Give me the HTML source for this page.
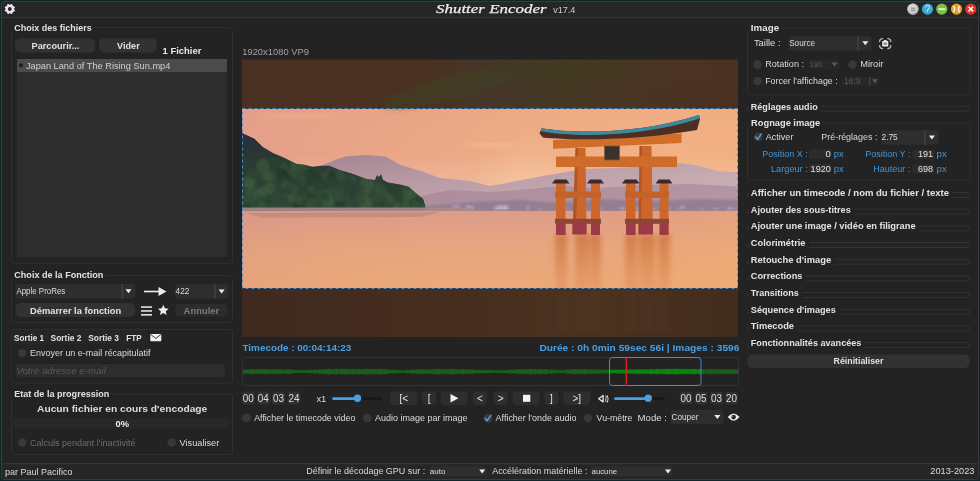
<!DOCTYPE html>
<html><head><meta charset="utf-8"><title>Shutter Encoder</title>
<style>html,body{margin:0;padding:0;background:#10262b;overflow:hidden;width:980px;height:481px}svg{display:block;will-change:transform}</style>
</head><body>
<svg width="980" height="481" viewBox="0 0 980 481">
<defs>
<radialGradient id="gball" cx="0.45" cy="0.4" r="0.65"><stop offset="0" stop-color="#e0e0e0"/><stop offset="0.7" stop-color="#c4c4c4"/><stop offset="1" stop-color="#9a9a9a"/></radialGradient>
</defs>
<rect x="0" y="0" width="980" height="481" fill="#10262b"/>
<rect x="1" y="1" width="978" height="479" rx="2.5" fill="#232323"/>
<rect x="1.5" y="1.5" width="977" height="478" rx="2.5" fill="none" stroke="#3b3b3b" stroke-width="1"/>
<path d="M2,17 V5 Q2,2 5,2 H975 Q978,2 978,5 V17 Z" fill="#262626"/>
<rect x="2" y="17" width="976" height="1" rx="0" fill="#363636" />
<path d="M2,464 H978 V476 Q978,479 975,479 H5 Q2,479 2,476 Z" fill="#262626"/>
<rect x="2" y="463" width="976" height="1.4" rx="0" fill="#343434" />
<circle cx="9.8" cy="9.0" r="4.1" fill="#e8e8e8"/>
<circle cx="13.50" cy="10.53" r="1.25" fill="#e8e8e8"/>
<circle cx="11.33" cy="12.70" r="1.25" fill="#e8e8e8"/>
<circle cx="8.27" cy="12.70" r="1.25" fill="#e8e8e8"/>
<circle cx="6.10" cy="10.53" r="1.25" fill="#e8e8e8"/>
<circle cx="6.10" cy="7.47" r="1.25" fill="#e8e8e8"/>
<circle cx="8.27" cy="5.30" r="1.25" fill="#e8e8e8"/>
<circle cx="11.33" cy="5.30" r="1.25" fill="#e8e8e8"/>
<circle cx="13.50" cy="7.47" r="1.25" fill="#e8e8e8"/>
<circle cx="9.8" cy="9.0" r="1.9" fill="#262626"/>
<text x="436" y="13.2" font-family="Liberation Serif" font-size="13.5" font-weight="400" font-style="italic" fill="#eeeeee" stroke="#eeeeee" stroke-width="0.25" textLength="110.5" lengthAdjust="spacingAndGlyphs">Shutter Encoder</text>
<text x="553.2" y="13" font-family="Liberation Sans" font-size="8.6" font-weight="400" fill="#cfcfcf" textLength="22.2" lengthAdjust="spacingAndGlyphs" >v17.4</text>
<circle cx="912.9" cy="9.1" r="5.6" fill="#c0c0c0"/>
<circle cx="912.9" cy="9.1" r="5.6" fill="url(#gball)"/>
<rect x="911.4" y="7.6" width="1.2" height="1.2" fill="#5a5a5a"/>
<rect x="911.4" y="9.6" width="1.2" height="1.2" fill="#5a5a5a"/>
<rect x="913.4" y="7.6" width="1.2" height="1.2" fill="#5a5a5a"/>
<rect x="913.4" y="9.6" width="1.2" height="1.2" fill="#5a5a5a"/>
<circle cx="927.5" cy="9.1" r="5.6" fill="#39a6d6"/>
<path d="M925.6,7.4 Q925.6,5.3 927.5,5.3 Q929.6,5.3 929.6,7.3 Q929.6,8.7 928.1,9.4 Q927.2,9.9 927.2,11.0 V12.2" fill="none" stroke="#b8e2f2" stroke-width="1.1"/>
<circle cx="941.8" cy="9.1" r="5.6" fill="#7cc242"/>
<rect x="938.4" y="8.2" width="6.8" height="1.9" rx="0" fill="#e4f2d8" />
<circle cx="956.5" cy="9.1" r="5.6" fill="#e2a031"/>
<path d="M953.6,6.4 Q955.6,9.1 953.6,11.8" fill="none" stroke="#fdf0d8" stroke-width="1.4" stroke-linecap="round"/>
<path d="M959.4,6.4 Q957.4,9.1 959.4,11.8" fill="none" stroke="#fdf0d8" stroke-width="1.4" stroke-linecap="round"/>
<circle cx="970.8" cy="9.1" r="5.6" fill="#e3352b"/>
<path d="M968.5,6.8 L973.0999999999999,11.4 M973.0999999999999,6.8 L968.5,11.4" stroke="#ffffff" stroke-width="1.5"/>
<rect x="11.5" y="27.5" width="221" height="236" rx="3" fill="none" stroke="#2f2f2f" stroke-width="1" />
<rect x="11.7" y="25" width="82.6" height="5" rx="0" fill="#232323" />
<text x="14.3" y="31.2" font-family="Liberation Sans" font-size="9.2" font-weight="700" fill="#e2e2e2" textLength="77.4" lengthAdjust="spacingAndGlyphs" >Choix des fichiers</text>
<rect x="15" y="38.5" width="80" height="14" rx="5" fill="#323232" />
<text x="31.6" y="49" font-family="Liberation Sans" font-size="9.6" font-weight="700" fill="#e2e2e2" textLength="47.8" lengthAdjust="spacingAndGlyphs" >Parcourir...</text>
<rect x="99" y="38.5" width="58" height="14" rx="5" fill="#323232" />
<text x="117.1" y="49" font-family="Liberation Sans" font-size="9.6" font-weight="700" fill="#e2e2e2" textLength="22.6" lengthAdjust="spacingAndGlyphs" >Vider</text>
<text x="162.6" y="54" font-family="Liberation Sans" font-size="9.4" font-weight="700" fill="#e8e8e8" textLength="38.8" lengthAdjust="spacingAndGlyphs" >1 Fichier</text>
<rect x="17" y="59" width="210" height="198" rx="0" fill="#2d2d2d" />
<rect x="17" y="59" width="210" height="13" rx="0" fill="#4b4b4b" />
<circle cx="21" cy="65.2" r="2" fill="#1e1e1e"/>
<text x="25.9" y="68.8" font-family="Liberation Sans" font-size="9.4" font-weight="400" fill="#cfcfcf" textLength="144.5" lengthAdjust="spacingAndGlyphs" >Japan Land of The Rising Sun.mp4</text>
<rect x="11.5" y="275.5" width="221" height="47" rx="3" fill="none" stroke="#2f2f2f" stroke-width="1" />
<rect x="11.7" y="273" width="94.3" height="5" rx="0" fill="#232323" />
<text x="14.3" y="278.2" font-family="Liberation Sans" font-size="9.2" font-weight="700" fill="#e2e2e2" textLength="89.1" lengthAdjust="spacingAndGlyphs" >Choix de la Fonction</text>
<rect x="15.6" y="284" width="119.6" height="14.5" rx="3" fill="#2e2e2e" />
<rect x="121.7" y="284" width="1" height="14.5" rx="0" fill="#4a4a4a" />
<path d="M125.5,289.25 L131.5,289.25 L128.5,293.25 Z" fill="#eeeeee"/>
<text x="16.4" y="293.7" font-family="Liberation Sans" font-size="8.6" font-weight="400" fill="#dddddd" textLength="48.9" lengthAdjust="spacingAndGlyphs" >Apple ProRes</text>
<path d="M144,291.5 H160" stroke="#eeeeee" stroke-width="1.6"/>
<path d="M158.5,287 L166.5,291.5 L158.5,296 Z" fill="#eeeeee"/>
<rect x="175" y="284.3" width="53" height="14.199999999999989" rx="3" fill="#2e2e2e" />
<rect x="214.5" y="284.3" width="1" height="14.199999999999989" rx="0" fill="#4a4a4a" />
<path d="M218.6,289.4 L224.6,289.4 L221.6,293.4 Z" fill="#eeeeee"/>
<text x="175.6" y="293.7" font-family="Liberation Sans" font-size="8.6" font-weight="400" fill="#dddddd" textLength="13.8" lengthAdjust="spacingAndGlyphs" >422</text>
<rect x="15.6" y="303" width="119.6" height="14" rx="5" fill="#323232" />
<text x="30.1" y="313.8" font-family="Liberation Sans" font-size="9" font-weight="700" fill="#e2e2e2" textLength="91.1" lengthAdjust="spacingAndGlyphs" >Démarrer la fonction</text>
<rect x="141" y="306.3" width="11" height="1.5" rx="0" fill="#eeeeee" />
<rect x="141" y="310.2" width="11" height="1.5" rx="0" fill="#eeeeee" />
<rect x="141" y="314.1" width="11" height="1.5" rx="0" fill="#eeeeee" />
<polygon points="163.30,304.80 164.83,308.30 168.63,308.67 165.77,311.20 166.59,314.93 163.30,313.00 160.01,314.93 160.83,311.20 157.97,308.67 161.77,308.30" fill="#eeeeee"/>
<rect x="175" y="304" width="53" height="12.5" rx="5" fill="#2c2c2c" />
<text x="183.6" y="313.8" font-family="Liberation Sans" font-size="9" font-weight="700" fill="#7a7a7a" textLength="35.6" lengthAdjust="spacingAndGlyphs" >Annuler</text>
<rect x="11" y="329.5" width="221.5" height="53.5" rx="3" fill="none" stroke="#2f2f2f" stroke-width="1" />
<rect x="11.5" y="330" width="134" height="14.5" rx="0" fill="#262626" />
<text x="14.1" y="340.8" font-family="Liberation Sans" font-size="8.6" font-weight="700" fill="#e2e2e2" textLength="29.9" lengthAdjust="spacingAndGlyphs" >Sortie 1</text>
<text x="50.6" y="340.8" font-family="Liberation Sans" font-size="8.6" font-weight="700" fill="#e2e2e2" textLength="30.8" lengthAdjust="spacingAndGlyphs" >Sortie 2</text>
<text x="88.3" y="340.8" font-family="Liberation Sans" font-size="8.6" font-weight="700" fill="#e2e2e2" textLength="30.6" lengthAdjust="spacingAndGlyphs" >Sortie 3</text>
<text x="126.3" y="340.8" font-family="Liberation Sans" font-size="8.6" font-weight="700" fill="#e2e2e2" textLength="15.4" lengthAdjust="spacingAndGlyphs" >FTP</text>
<rect x="150.3" y="334" width="11" height="7.2" rx="0.8" fill="#f2f2f2" />
<path d="M150.8,334.6 L155.8,338.4 L160.8,334.6" fill="none" stroke="#262626" stroke-width="0.9"/>
<circle cx="22.3" cy="353" r="4.3" fill="#383838"/>
<text x="30.1" y="355.6" font-family="Liberation Sans" font-size="9.2" font-weight="400" fill="#dcdcdc" textLength="120.3" lengthAdjust="spacingAndGlyphs" >Envoyer un e-mail récapitulatif</text>
<rect x="16" y="364" width="209" height="13" rx="3" fill="#2d2d2d" />
<text x="16.3" y="373.5" font-family="Liberation Sans" font-size="9.2" font-weight="400" fill="#5a5a5a" font-style="italic" textLength="89.6" lengthAdjust="spacingAndGlyphs" >Votre adresse e-mail</text>
<rect x="11.5" y="394.0" width="221" height="60.5" rx="3" fill="none" stroke="#2f2f2f" stroke-width="1" />
<rect x="11.6" y="391.5" width="100.4" height="5" rx="0" fill="#232323" />
<text x="14.2" y="397.4" font-family="Liberation Sans" font-size="9.2" font-weight="700" fill="#e2e2e2" textLength="95.2" lengthAdjust="spacingAndGlyphs" >Etat de la progression</text>
<text x="37.0" y="411.7" font-family="Liberation Sans" font-size="9.4" font-weight="700" fill="#dedede" textLength="170.3" lengthAdjust="spacingAndGlyphs" >Aucun fichier en cours d'encodage</text>
<rect x="13.1" y="418.5" width="216.6" height="9.4" rx="4" fill="#282828" />
<text x="115.6" y="427.2" font-family="Liberation Sans" font-size="8.8" font-weight="700" fill="#eeeeee" textLength="13.5" lengthAdjust="spacingAndGlyphs" >0%</text>
<circle cx="22.3" cy="442.5" r="4.3" fill="#383838"/>
<text x="30.1" y="446.3" font-family="Liberation Sans" font-size="9.2" font-weight="400" fill="#6e6e6e" textLength="105.3" lengthAdjust="spacingAndGlyphs" >Calculs pendant l'inactivité</text>
<circle cx="171.7" cy="442.5" r="4.3" fill="#383838"/>
<text x="179.6" y="445.9" font-family="Liberation Sans" font-size="9.2" font-weight="400" fill="#dcdcdc" textLength="39.7" lengthAdjust="spacingAndGlyphs" >Visualiser</text>
<text x="5.1" y="474.5" font-family="Liberation Sans" font-size="9.2" font-weight="400" fill="#dcdcdc" textLength="67.3" lengthAdjust="spacingAndGlyphs" >par Paul Pacifico</text>
<text x="306.2" y="474.3" font-family="Liberation Sans" font-size="9.2" font-weight="400" fill="#dcdcdc" textLength="119.0" lengthAdjust="spacingAndGlyphs" >Définir le décodage GPU sur :</text>
<rect x="429.2" y="466.6" width="57.10000000000002" height="9.699999999999989" rx="3" fill="#2e2e2e" />
<path d="M479.2,469.45000000000005 L485.2,469.45000000000005 L482.2,473.45000000000005 Z" fill="#eeeeee"/>
<text x="429.8" y="473.8" font-family="Liberation Sans" font-size="8" font-weight="400" fill="#dddddd" textLength="15.6" lengthAdjust="spacingAndGlyphs" >auto</text>
<text x="492.2" y="474.3" font-family="Liberation Sans" font-size="9.2" font-weight="400" fill="#dcdcdc" textLength="95.2" lengthAdjust="spacingAndGlyphs" >Accélération matérielle :</text>
<rect x="591.2" y="466.6" width="81.09999999999991" height="9.699999999999989" rx="3" fill="#2e2e2e" />
<path d="M665.0,469.45000000000005 L671.0,469.45000000000005 L668,473.45000000000005 Z" fill="#eeeeee"/>
<text x="591.6" y="473.8" font-family="Liberation Sans" font-size="8" font-weight="400" fill="#dddddd" textLength="25.5" lengthAdjust="spacingAndGlyphs" >aucune</text>
<text x="930.3" y="474.4" font-family="Liberation Sans" font-size="9.2" font-weight="400" fill="#dcdcdc" textLength="44.1" lengthAdjust="spacingAndGlyphs" >2013-2023</text>
<text x="242.2" y="55" font-family="Liberation Sans" font-size="9" font-weight="400" fill="#a0a0a0" textLength="66.9" lengthAdjust="spacingAndGlyphs" >1920x1080 VP9</text>
<defs>
<filter id="soft" x="-5%" y="-5%" width="110%" height="110%"><feGaussianBlur stdDeviation="0.55"/></filter>
<filter id="soft1" x="-5%" y="-5%" width="110%" height="110%"><feGaussianBlur stdDeviation="1.1"/></filter>
<filter id="soft2" x="-20%" y="-20%" width="140%" height="140%"><feGaussianBlur stdDeviation="2.5"/></filter>
<linearGradient id="skyH" x1="242" y1="0" x2="738" y2="0" gradientUnits="userSpaceOnUse">
 <stop offset="0" stop-color="#e4a08a"/><stop offset="0.3" stop-color="#eaa686"/><stop offset="0.55" stop-color="#eeac85"/><stop offset="0.78" stop-color="#f2b084"/><stop offset="1" stop-color="#f2b082"/>
</linearGradient>
<linearGradient id="skyV" x1="0" y1="109" x2="0" y2="212" gradientUnits="userSpaceOnUse">
 <stop offset="0" stop-color="#d08080" stop-opacity="0.06"/><stop offset="0.5" stop-color="#f4b088" stop-opacity="0"/><stop offset="1" stop-color="#f8c49a" stop-opacity="0.3"/>
</linearGradient>
<radialGradient id="glow" cx="530" cy="192" r="60" gradientUnits="userSpaceOnUse">
 <stop offset="0" stop-color="#fcd4a4" stop-opacity="0.45"/><stop offset="1" stop-color="#fcd4a4" stop-opacity="0"/>
</radialGradient>
<linearGradient id="mtn" x1="300" y1="0" x2="738" y2="0" gradientUnits="userSpaceOnUse">
 <stop offset="0" stop-color="#a28290"/><stop offset="0.5" stop-color="#b4949e"/><stop offset="1" stop-color="#bea2aa"/>
</linearGradient>
<linearGradient id="mtnV" x1="0" y1="155" x2="0" y2="212" gradientUnits="userSpaceOnUse">
 <stop offset="0" stop-color="#ffffff" stop-opacity="0"/><stop offset="1" stop-color="#e8c8c8" stop-opacity="0.35"/>
</linearGradient>
<linearGradient id="water" x1="0" y1="212" x2="0" y2="337" gradientUnits="userSpaceOnUse">
 <stop offset="0" stop-color="#dc9c88"/><stop offset="0.3" stop-color="#e8a67e"/><stop offset="1" stop-color="#f2ae72"/>
</linearGradient>
<linearGradient id="waterH" x1="242" y1="0" x2="738" y2="0" gradientUnits="userSpaceOnUse">
 <stop offset="0" stop-color="#c88488" stop-opacity="0.15"/><stop offset="0.5" stop-color="#e8a070" stop-opacity="0"/><stop offset="1" stop-color="#ffb460" stop-opacity="0.22"/>
</linearGradient>
<linearGradient id="forest" x1="0" y1="132" x2="0" y2="210" gradientUnits="userSpaceOnUse">
 <stop offset="0" stop-color="#2a2c3c"/><stop offset="0.35" stop-color="#2a3a34"/><stop offset="1" stop-color="#304836"/>
</linearGradient>
<linearGradient id="topband" x1="242" y1="0" x2="738" y2="0" gradientUnits="userSpaceOnUse">
 <stop offset="0" stop-color="#4a3022"/><stop offset="0.35" stop-color="#4a3121"/><stop offset="0.5" stop-color="#45362a"/><stop offset="0.65" stop-color="#453823"/><stop offset="0.85" stop-color="#4a3424"/><stop offset="1" stop-color="#4a3222"/>
</linearGradient>
<linearGradient id="botband" x1="242" y1="0" x2="738" y2="0" gradientUnits="userSpaceOnUse">
 <stop offset="0" stop-color="#40291f"/><stop offset="0.5" stop-color="#472f1f"/><stop offset="0.7" stop-color="#4b321f"/><stop offset="1" stop-color="#422c1e"/>
</linearGradient>
<linearGradient id="refl" x1="0" y1="236" x2="0" y2="290" gradientUnits="userSpaceOnUse">
 <stop offset="0" stop-color="#c05e22" stop-opacity="0.55"/><stop offset="1" stop-color="#d07030" stop-opacity="0.2"/>
</linearGradient>
<clipPath id="fclip"><path d="M232,128 L242,133 L254.5,138.7 L262.8,147 L273,153 L283.6,157.4 L296,163.7 L304,164.7 L312.7,166.8 L321,165.7 L329.3,165.7 L339.7,170 L350,173 L358.4,176 L366.7,179 L375,180 L377,175 L379,177 L381,174 L383,180 L387.5,182.4 L400,184.4 L408.3,186.5 L416.6,193.8 L423,199 L425,205 L426,211 L232,211 Z"/></clipPath>
<clipPath id="vclip"><rect x="242" y="59" width="496" height="278"/></clipPath>
</defs>
<g clip-path="url(#vclip)"><g filter="url(#soft)">
<rect x="232" y="59" width="516" height="155" fill="url(#skyH)"/>
<rect x="232" y="109" width="516" height="105" fill="url(#skyV)"/>
<rect x="232" y="109" width="516" height="105" fill="url(#glow)"/>
<ellipse cx="300" cy="116" rx="40" ry="2.5" fill="#f0b890" opacity="0.5" filter="url(#soft2)"/>
<ellipse cx="490" cy="145" rx="25" ry="2" fill="#f8c898" opacity="0.6" filter="url(#soft2)"/>
<path d="M300,170 L321,165.7 L335,160 L346,156.5 L366,155 L385.5,156.5 L400,164.7 L420.8,171 L440,178 L470,181 L490,186 L517,181 L544,175.7 L585,169 L625,167.6 L660,164 L679,163 L695,165 L720,171.6 L748,173 L748,214 L300,214 Z" fill="url(#mtn)"/>
<rect x="290" y="155" width="458" height="59" fill="url(#mtnV)"/>
<path d="M420,196 L450,190 L490,192 L520,190 L560,186 L600,188 L640,185 L690,184 L748,187 L748,214 L420,214 Z" fill="#a08094" opacity="0.55"/>
<g filter="url(#soft1)">
<path d="M425,206 L470,202 L520,200 L560,203 L600,199 L650,201 L700,199 L748,200 L748,212 L425,212 Z" fill="#8a788e" opacity="0.75"/>
<rect x="575.7" y="205.3" width="4.8" height="5.7" fill="#c8b8c4" opacity="0.5"/>
<rect x="579.7" y="206.7" width="4.5" height="4.3" fill="#c8b8c4" opacity="0.5"/>
<rect x="495.4" y="206.5" width="4.6" height="4.5" fill="#c8b8c4" opacity="0.5"/>
<rect x="677.9" y="207.8" width="2.5" height="3.2" fill="#c8b8c4" opacity="0.5"/>
<rect x="467.2" y="206.2" width="6.0" height="4.8" fill="#c8b8c4" opacity="0.5"/>
<rect x="452.6" y="205.1" width="6.9" height="5.9" fill="#c8b8c4" opacity="0.5"/>
<rect x="636.2" y="208.4" width="5.1" height="2.6" fill="#c8b8c4" opacity="0.5"/>
<rect x="444.5" y="208.8" width="4.6" height="2.2" fill="#c8b8c4" opacity="0.5"/>
<rect x="497.1" y="208.9" width="3.2" height="2.1" fill="#c8b8c4" opacity="0.5"/>
<rect x="579.2" y="205.6" width="4.2" height="5.4" fill="#c8b8c4" opacity="0.5"/>
<rect x="595.7" y="207.0" width="5.2" height="4.0" fill="#c8b8c4" opacity="0.5"/>
<rect x="638.7" y="207.9" width="4.3" height="3.1" fill="#c8b8c4" opacity="0.5"/>
<rect x="739.3" y="205.6" width="7.0" height="5.4" fill="#c8b8c4" opacity="0.5"/>
<rect x="652.3" y="208.1" width="3.6" height="2.9" fill="#c8b8c4" opacity="0.5"/>
<rect x="526.7" y="205.9" width="2.4" height="5.1" fill="#c8b8c4" opacity="0.5"/>
<rect x="560.1" y="207.5" width="6.2" height="3.5" fill="#c8b8c4" opacity="0.5"/>
<rect x="727.4" y="209.0" width="6.2" height="2.0" fill="#c8b8c4" opacity="0.5"/>
<rect x="502.9" y="207.1" width="6.6" height="3.9" fill="#c8b8c4" opacity="0.5"/>
<rect x="734.1" y="208.7" width="4.0" height="2.3" fill="#c8b8c4" opacity="0.5"/>
<rect x="628.8" y="207.9" width="5.9" height="3.1" fill="#c8b8c4" opacity="0.5"/>
<rect x="466.1" y="205.1" width="3.7" height="5.9" fill="#c8b8c4" opacity="0.5"/>
<rect x="667.4" y="208.0" width="2.6" height="3.0" fill="#c8b8c4" opacity="0.5"/>
<rect x="470.3" y="205.8" width="2.3" height="5.2" fill="#c8b8c4" opacity="0.5"/>
<rect x="493.3" y="207.2" width="4.8" height="3.8" fill="#c8b8c4" opacity="0.5"/>
<rect x="497.2" y="208.5" width="5.7" height="2.5" fill="#c8b8c4" opacity="0.5"/>
<rect x="633.1" y="207.3" width="2.6" height="3.7" fill="#c8b8c4" opacity="0.5"/>
<rect x="503.9" y="205.1" width="3.3" height="5.9" fill="#c8b8c4" opacity="0.5"/>
<rect x="681.0" y="205.5" width="3.5" height="5.5" fill="#c8b8c4" opacity="0.5"/>
<rect x="503.2" y="205.6" width="4.0" height="5.4" fill="#c8b8c4" opacity="0.5"/>
<rect x="632.6" y="205.0" width="2.5" height="6.0" fill="#c8b8c4" opacity="0.5"/>
<rect x="504.0" y="205.9" width="3.3" height="5.1" fill="#c8b8c4" opacity="0.5"/>
<rect x="538.7" y="208.7" width="3.5" height="2.3" fill="#c8b8c4" opacity="0.5"/>
<rect x="467.0" y="208.0" width="4.9" height="3.0" fill="#c8b8c4" opacity="0.5"/>
<rect x="620.4" y="207.2" width="3.9" height="3.8" fill="#c8b8c4" opacity="0.5"/>
<rect x="727.7" y="206.7" width="4.4" height="4.3" fill="#c8b8c4" opacity="0.5"/>
<rect x="700.0" y="208.4" width="2.9" height="2.6" fill="#c8b8c4" opacity="0.5"/>
<rect x="712.5" y="208.0" width="6.1" height="3.0" fill="#c8b8c4" opacity="0.5"/>
<rect x="496.9" y="205.2" width="5.7" height="5.8" fill="#c8b8c4" opacity="0.5"/>
<rect x="499.0" y="205.5" width="6.8" height="5.5" fill="#c8b8c4" opacity="0.5"/>
<rect x="621.1" y="208.6" width="4.1" height="2.4" fill="#c8b8c4" opacity="0.5"/>
</g>
<path d="M232,128 L242,133 L254.5,138.7 L262.8,147 L273,153 L283.6,157.4 L296,163.7 L304,164.7 L312.7,166.8 L321,165.7 L329.3,165.7 L339.7,170 L350,173 L358.4,176 L366.7,179 L375,180 L377,175 L379,177 L381,174 L383,180 L387.5,182.4 L400,184.4 L408.3,186.5 L416.6,193.8 L423,199 L425,205 L426,211 L232,211 Z" fill="url(#forest)"/>
<g clip-path="url(#fclip)" filter="url(#soft1)">
<circle cx="285.8" cy="186.1" r="4.5" fill="#3c5a3c" opacity="0.65"/>
<circle cx="329.2" cy="190.9" r="5.4" fill="#24352a" opacity="0.65"/>
<circle cx="289.7" cy="171.2" r="7.0" fill="#24352a" opacity="0.65"/>
<circle cx="341.5" cy="191.2" r="4.6" fill="#304834" opacity="0.65"/>
<circle cx="284.7" cy="167.3" r="6.7" fill="#24352a" opacity="0.65"/>
<circle cx="378.4" cy="199.1" r="3.3" fill="#3c5a3c" opacity="0.65"/>
<circle cx="249.9" cy="197.4" r="6.3" fill="#36503a" opacity="0.65"/>
<circle cx="329.0" cy="196.5" r="6.5" fill="#24352a" opacity="0.65"/>
<circle cx="314.7" cy="199.1" r="4.8" fill="#304834" opacity="0.65"/>
<circle cx="403.7" cy="190.0" r="3.5" fill="#304834" opacity="0.65"/>
<circle cx="289.5" cy="192.3" r="6.1" fill="#36503a" opacity="0.65"/>
<circle cx="319.5" cy="200.7" r="5.3" fill="#3c5a3c" opacity="0.65"/>
<circle cx="349.7" cy="193.4" r="6.6" fill="#2a3e2e" opacity="0.65"/>
<circle cx="399.6" cy="207.8" r="5.7" fill="#304834" opacity="0.65"/>
<circle cx="370.5" cy="188.3" r="5.2" fill="#3c5a3c" opacity="0.65"/>
<circle cx="346.7" cy="197.7" r="3.8" fill="#3c5a3c" opacity="0.65"/>
<circle cx="291.1" cy="166.0" r="4.9" fill="#24352a" opacity="0.65"/>
<circle cx="258.3" cy="198.4" r="4.6" fill="#304834" opacity="0.65"/>
<circle cx="245.7" cy="180.5" r="4.7" fill="#2a3e2e" opacity="0.65"/>
<circle cx="250.1" cy="189.5" r="3.2" fill="#3c5a3c" opacity="0.65"/>
<circle cx="302.9" cy="202.3" r="6.9" fill="#3c5a3c" opacity="0.65"/>
<circle cx="285.4" cy="161.7" r="3.0" fill="#2a3e2e" opacity="0.65"/>
<circle cx="352.4" cy="174.7" r="3.8" fill="#24352a" opacity="0.65"/>
<circle cx="295.7" cy="172.6" r="5.8" fill="#36503a" opacity="0.65"/>
<circle cx="299.7" cy="206.0" r="6.6" fill="#24352a" opacity="0.65"/>
<circle cx="311.3" cy="202.0" r="4.5" fill="#3c5a3c" opacity="0.65"/>
<circle cx="367.3" cy="180.9" r="6.9" fill="#3c5a3c" opacity="0.65"/>
<circle cx="291.9" cy="190.4" r="5.9" fill="#36503a" opacity="0.65"/>
<circle cx="322.5" cy="176.3" r="4.2" fill="#36503a" opacity="0.65"/>
<circle cx="244.1" cy="179.9" r="5.3" fill="#2a3e2e" opacity="0.65"/>
<circle cx="311.3" cy="189.2" r="3.5" fill="#36503a" opacity="0.65"/>
<circle cx="327.8" cy="194.8" r="4.4" fill="#36503a" opacity="0.65"/>
<circle cx="377.8" cy="181.4" r="3.2" fill="#2a3e2e" opacity="0.65"/>
<circle cx="419.2" cy="196.3" r="4.8" fill="#3c5a3c" opacity="0.65"/>
<circle cx="352.7" cy="179.8" r="3.7" fill="#36503a" opacity="0.65"/>
<circle cx="397.3" cy="192.0" r="6.1" fill="#2a3e2e" opacity="0.65"/>
<circle cx="384.1" cy="183.2" r="5.3" fill="#304834" opacity="0.65"/>
<circle cx="299.0" cy="170.7" r="6.2" fill="#304834" opacity="0.65"/>
<circle cx="302.3" cy="192.5" r="5.6" fill="#2a3e2e" opacity="0.65"/>
<circle cx="260.7" cy="175.5" r="4.3" fill="#304834" opacity="0.65"/>
<circle cx="322.7" cy="201.8" r="3.7" fill="#36503a" opacity="0.65"/>
<circle cx="378.5" cy="186.9" r="5.3" fill="#36503a" opacity="0.65"/>
<circle cx="283.4" cy="165.8" r="5.1" fill="#304834" opacity="0.65"/>
<circle cx="300.0" cy="200.1" r="5.3" fill="#36503a" opacity="0.65"/>
<circle cx="304.6" cy="199.8" r="3.3" fill="#3c5a3c" opacity="0.65"/>
<circle cx="305.5" cy="166.7" r="4.2" fill="#36503a" opacity="0.65"/>
<circle cx="327.5" cy="192.9" r="4.2" fill="#3c5a3c" opacity="0.65"/>
<circle cx="317.4" cy="204.5" r="3.6" fill="#2a3e2e" opacity="0.65"/>
<circle cx="329.8" cy="201.2" r="5.5" fill="#3c5a3c" opacity="0.65"/>
<circle cx="321.9" cy="205.9" r="6.7" fill="#304834" opacity="0.65"/>
<circle cx="247.9" cy="181.9" r="6.0" fill="#3c5a3c" opacity="0.65"/>
<circle cx="419.3" cy="200.9" r="6.6" fill="#2a3e2e" opacity="0.65"/>
<circle cx="399.9" cy="207.4" r="3.5" fill="#304834" opacity="0.65"/>
<circle cx="250.3" cy="203.4" r="5.8" fill="#304834" opacity="0.65"/>
<circle cx="407.0" cy="206.1" r="5.3" fill="#2a3e2e" opacity="0.65"/>
<circle cx="330.5" cy="172.4" r="5.0" fill="#304834" opacity="0.65"/>
<circle cx="364.0" cy="193.2" r="4.7" fill="#3c5a3c" opacity="0.65"/>
<circle cx="262.9" cy="166.0" r="6.9" fill="#3c5a3c" opacity="0.65"/>
<circle cx="329.8" cy="199.2" r="4.4" fill="#304834" opacity="0.65"/>
<circle cx="264.5" cy="202.6" r="3.5" fill="#304834" opacity="0.65"/>
<circle cx="387.7" cy="206.1" r="6.2" fill="#2a3e2e" opacity="0.65"/>
<circle cx="331.7" cy="190.8" r="4.6" fill="#36503a" opacity="0.65"/>
<circle cx="287.7" cy="189.7" r="5.1" fill="#2a3e2e" opacity="0.65"/>
<circle cx="329.0" cy="198.9" r="3.0" fill="#2a3e2e" opacity="0.65"/>
<circle cx="384.6" cy="183.9" r="3.2" fill="#24352a" opacity="0.65"/>
<circle cx="421.3" cy="205.8" r="3.3" fill="#3c5a3c" opacity="0.65"/>
<circle cx="332.2" cy="174.3" r="3.3" fill="#24352a" opacity="0.65"/>
<circle cx="361.0" cy="194.8" r="4.4" fill="#304834" opacity="0.65"/>
<circle cx="423.8" cy="199.8" r="3.5" fill="#2a3e2e" opacity="0.65"/>
<circle cx="373.8" cy="190.4" r="3.3" fill="#304834" opacity="0.65"/>
<circle cx="249.9" cy="182.1" r="5.6" fill="#3c5a3c" opacity="0.65"/>
<circle cx="312.0" cy="198.9" r="5.5" fill="#24352a" opacity="0.65"/>
<circle cx="251.8" cy="190.1" r="6.0" fill="#36503a" opacity="0.65"/>
<circle cx="319.4" cy="194.7" r="4.8" fill="#304834" opacity="0.65"/>
<circle cx="282.2" cy="173.0" r="5.4" fill="#24352a" opacity="0.65"/>
<circle cx="283.3" cy="166.3" r="3.1" fill="#36503a" opacity="0.65"/>
<circle cx="310.9" cy="203.3" r="6.2" fill="#36503a" opacity="0.65"/>
<circle cx="264.3" cy="193.1" r="6.8" fill="#3c5a3c" opacity="0.65"/>
<circle cx="387.8" cy="199.9" r="5.9" fill="#3c5a3c" opacity="0.65"/>
<circle cx="339.9" cy="200.9" r="5.9" fill="#24352a" opacity="0.65"/>
<circle cx="268.4" cy="197.2" r="3.2" fill="#2a3e2e" opacity="0.65"/>
<circle cx="345.8" cy="195.7" r="4.5" fill="#2a3e2e" opacity="0.65"/>
<circle cx="304.8" cy="201.0" r="3.1" fill="#2a3e2e" opacity="0.65"/>
<circle cx="365.9" cy="203.0" r="6.8" fill="#3c5a3c" opacity="0.65"/>
<circle cx="297.1" cy="164.3" r="7.0" fill="#3c5a3c" opacity="0.65"/>
<circle cx="336.1" cy="196.9" r="3.4" fill="#2a3e2e" opacity="0.65"/>
<circle cx="414.0" cy="192.0" r="4.3" fill="#3c5a3c" opacity="0.65"/>
<circle cx="275.2" cy="163.7" r="7.0" fill="#304834" opacity="0.65"/>
<circle cx="325.6" cy="195.5" r="6.8" fill="#36503a" opacity="0.65"/>
<circle cx="309.6" cy="180.1" r="4.4" fill="#24352a" opacity="0.65"/>
<circle cx="419.8" cy="198.3" r="3.9" fill="#24352a" opacity="0.65"/>
<circle cx="397.2" cy="207.3" r="4.7" fill="#3c5a3c" opacity="0.65"/>
<circle cx="381.1" cy="199.4" r="5.1" fill="#24352a" opacity="0.65"/>
<circle cx="270.7" cy="179.3" r="6.6" fill="#304834" opacity="0.65"/>
<circle cx="259.6" cy="195.9" r="6.7" fill="#3c5a3c" opacity="0.65"/>
<circle cx="416.9" cy="201.3" r="6.4" fill="#304834" opacity="0.65"/>
<circle cx="291.2" cy="169.6" r="5.3" fill="#36503a" opacity="0.65"/>
<circle cx="414.0" cy="205.5" r="5.2" fill="#36503a" opacity="0.65"/>
<circle cx="365.5" cy="203.6" r="5.4" fill="#3c5a3c" opacity="0.65"/>
<circle cx="349.6" cy="182.3" r="3.9" fill="#2a3e2e" opacity="0.65"/>
<circle cx="291.3" cy="198.6" r="3.8" fill="#3c5a3c" opacity="0.65"/>
<circle cx="308.3" cy="176.4" r="6.1" fill="#304834" opacity="0.65"/>
<circle cx="319.0" cy="194.8" r="5.8" fill="#304834" opacity="0.65"/>
<circle cx="328.1" cy="201.2" r="6.3" fill="#3c5a3c" opacity="0.65"/>
<circle cx="247.1" cy="207.7" r="3.3" fill="#24352a" opacity="0.65"/>
<circle cx="386.1" cy="205.1" r="3.2" fill="#304834" opacity="0.65"/>
<circle cx="405.9" cy="201.2" r="6.1" fill="#2a3e2e" opacity="0.65"/>
<circle cx="418.4" cy="205.7" r="4.0" fill="#304834" opacity="0.65"/>
<circle cx="384.7" cy="186.2" r="5.5" fill="#2a3e2e" opacity="0.65"/>
<circle cx="407.6" cy="193.9" r="6.5" fill="#36503a" opacity="0.65"/>
<circle cx="275.7" cy="164.4" r="6.2" fill="#2a3e2e" opacity="0.65"/>
<circle cx="259.0" cy="200.0" r="4.2" fill="#36503a" opacity="0.65"/>
<circle cx="325.2" cy="196.8" r="4.3" fill="#2a3e2e" opacity="0.65"/>
<circle cx="303.6" cy="180.9" r="4.9" fill="#304834" opacity="0.65"/>
<circle cx="360.6" cy="199.7" r="5.0" fill="#304834" opacity="0.65"/>
<circle cx="342.2" cy="175.2" r="4.1" fill="#24352a" opacity="0.65"/>
<circle cx="262.7" cy="202.6" r="6.6" fill="#2a3e2e" opacity="0.65"/>
<circle cx="339.1" cy="196.6" r="5.7" fill="#36503a" opacity="0.65"/>
<circle cx="381.3" cy="189.5" r="5.7" fill="#36503a" opacity="0.65"/>
<circle cx="261.7" cy="205.3" r="4.4" fill="#3c5a3c" opacity="0.65"/>
<circle cx="340.7" cy="174.6" r="5.0" fill="#36503a" opacity="0.65"/>
<circle cx="253.0" cy="174.1" r="5.9" fill="#304834" opacity="0.65"/>
<circle cx="360.8" cy="199.4" r="3.6" fill="#36503a" opacity="0.65"/>
<circle cx="405.7" cy="201.3" r="3.5" fill="#3c5a3c" opacity="0.65"/>
<circle cx="268.0" cy="175.9" r="5.9" fill="#3c5a3c" opacity="0.65"/>
<circle cx="319.3" cy="177.5" r="3.7" fill="#24352a" opacity="0.65"/>
<circle cx="299.5" cy="168.5" r="3.3" fill="#304834" opacity="0.65"/>
<circle cx="380.8" cy="196.0" r="6.0" fill="#36503a" opacity="0.65"/>
<circle cx="260.4" cy="173.0" r="3.2" fill="#304834" opacity="0.65"/>
<circle cx="249.7" cy="184.2" r="4.0" fill="#3c5a3c" opacity="0.65"/>
<circle cx="307.2" cy="176.6" r="4.6" fill="#3c5a3c" opacity="0.65"/>
<circle cx="390.9" cy="186.1" r="5.0" fill="#2a3e2e" opacity="0.65"/>
<circle cx="269.9" cy="188.3" r="5.7" fill="#3c5a3c" opacity="0.65"/>
<circle cx="385.3" cy="201.2" r="3.7" fill="#304834" opacity="0.65"/>
<circle cx="346.3" cy="196.1" r="4.6" fill="#304834" opacity="0.65"/>
<circle cx="350.9" cy="178.3" r="4.6" fill="#304834" opacity="0.65"/>
<circle cx="342.2" cy="177.2" r="3.7" fill="#36503a" opacity="0.65"/>
<circle cx="310.0" cy="175.3" r="6.4" fill="#24352a" opacity="0.65"/>
<circle cx="406.0" cy="207.0" r="4.5" fill="#3c5a3c" opacity="0.65"/>
<circle cx="408.7" cy="195.2" r="5.0" fill="#3c5a3c" opacity="0.65"/>
</g>
<rect x="232" y="207.5" width="240" height="3.5" fill="#a88a88" opacity="0.9"/>
<rect x="470" y="209" width="278" height="3" fill="#a4808a" opacity="0.7"/>
<rect x="232" y="211" width="516" height="136" fill="url(#water)"/>
<rect x="232" y="211" width="516" height="136" fill="url(#waterH)"/>
<path d="M246,213 L440,212 L420,217 L262,217.5 Z" fill="#b88078" opacity="0.55"/>
<g filter="url(#soft2)">
<rect x="555" y="234" width="12" height="58" fill="url(#refl)"/>
<rect x="575" y="234" width="14" height="58" fill="url(#refl)"/>
<rect x="590" y="234" width="11" height="58" fill="url(#refl)"/>
<rect x="625" y="234" width="12" height="58" fill="url(#refl)"/>
<rect x="639" y="234" width="16" height="58" fill="url(#refl)"/>
<rect x="658" y="234" width="12" height="58" fill="url(#refl)"/>
</g>
<path d="M575.5,148 L585.5,148 L586.5,234 L572.5,234 Z" fill="#cc662a"/>
<path d="M639.5,146 L651.5,146 L653,234 L638.5,234 Z" fill="#cc662a"/>
<path d="M575.5,148 L578,148 L576,234 L572.5,234 Z" fill="#8a3a1c" opacity="0.4"/>
<path d="M639.5,146 L642,146 L641,234 L638.5,234 Z" fill="#8a3a1c" opacity="0.4"/>
<rect x="556" y="183" width="9.5" height="52" fill="#cc662a"/>
<path d="M552,183.6 L555,179.4 L566.5,179.4 L569.5,183.6 Z" fill="#3a2a26"/>
<rect x="556" y="223.5" width="9.5" height="11.5" fill="#9c3a46"/>
<rect x="591" y="183" width="9" height="52" fill="#cc662a"/>
<path d="M587,183.6 L590,179.4 L601,179.4 L604,183.6 Z" fill="#3a2a26"/>
<rect x="591" y="223.5" width="9" height="11.5" fill="#9c3a46"/>
<rect x="626" y="183" width="9.5" height="52" fill="#cc662a"/>
<path d="M622,183.6 L625,179.4 L636.5,179.4 L639.5,183.6 Z" fill="#3a2a26"/>
<rect x="626" y="223.5" width="9.5" height="11.5" fill="#9c3a46"/>
<rect x="659.6" y="183" width="8.899999999999977" height="52" fill="#cc662a"/>
<path d="M655.6,183.6 L658.6,179.4 L669.5,179.4 L672.5,183.6 Z" fill="#3a2a26"/>
<rect x="659.6" y="223.5" width="8.899999999999977" height="11.5" fill="#9c3a46"/>
<rect x="572.5" y="223" width="14" height="11.5" fill="#9c3a46"/>
<rect x="638.5" y="223" width="14.5" height="11.5" fill="#9c3a46"/>
<rect x="555" y="191.5" width="46" height="6.5" fill="#c4622a"/>
<rect x="625" y="191.5" width="44" height="6.5" fill="#c4622a"/>
<rect x="555" y="218.8" width="46" height="5" fill="#8e4438"/>
<rect x="625" y="218.8" width="44" height="5" fill="#8e4438"/>
<rect x="556" y="156.5" width="121" height="10.5" fill="#d06c2c"/>
<path d="M553,140 L681.5,133.5 L681.5,143 L553,148.7 Z" fill="#d06e2a"/>
<rect x="604.5" y="146" width="15" height="14" fill="#3a332c" stroke="#7a5a30" stroke-width="0.8"/>
<path d="M541.6,128.3 C575,134 640,134 699,115 L700,119 L697,130 C640,140 575,141 543,137.5 L539.5,133.5 Z" fill="#4e2e24"/>
<path d="M541.6,128.3 C575,134 640,134 699,115 L699.6,118.5 C640,137.5 575,137.5 541,131.3 Z" fill="#3a8aa2"/>
</g></g>
<rect x="242" y="59" width="496" height="50" fill="url(#topband)"/>
<g clip-path="url(#vclip)"><g filter="url(#soft2)">
<ellipse cx="450" cy="88" rx="70" ry="12" fill="#3e4020" opacity="0.5" transform="rotate(-14 450 88)"/>
<ellipse cx="560" cy="70" rx="70" ry="10" fill="#3e4022" opacity="0.35"/>
<ellipse cx="690" cy="95" rx="45" ry="10" fill="#4a3022" opacity="0.3"/>
</g></g>
<rect x="242" y="288" width="496" height="49" fill="url(#botband)"/>
<g filter="url(#soft2)">
<rect x="556" y="292" width="12" height="40" fill="#583a20" opacity="0.2"/>
<rect x="576" y="292" width="12" height="40" fill="#583a20" opacity="0.2"/>
<rect x="590" y="292" width="11" height="40" fill="#583a20" opacity="0.2"/>
<rect x="625" y="292" width="12" height="40" fill="#583a20" opacity="0.2"/>
<rect x="640" y="292" width="14" height="40" fill="#583a20" opacity="0.2"/>
<rect x="657" y="292" width="12" height="40" fill="#583a20" opacity="0.2"/>
</g>
<rect x="242" y="59" width="496" height="1" fill="#2e2a24"/>
<rect x="242.5" y="108.5" width="495" height="180" fill="none" stroke="#3d8fd6" stroke-width="1" stroke-dasharray="3 3"/>
<text x="242.5" y="350.8" font-family="Liberation Sans" font-size="9.6" font-weight="700" fill="#4a9fe3" textLength="108.7" lengthAdjust="spacingAndGlyphs" >Timecode : 00:04:14:23</text>
<text x="539.4" y="350.6" font-family="Liberation Sans" font-size="9.6" font-weight="700" fill="#4a9fe3" textLength="200.0" lengthAdjust="spacingAndGlyphs" >Durée : 0h 0min 59sec 56i | Images : 3596</text>
<rect x="242.5" y="357.5" width="496" height="28" rx="3" fill="#232323" stroke="#333333" stroke-width="1" />
<polygon points="243.0,369.62 243.5,369.76 244.0,369.30 244.5,369.82 245.0,369.38 245.5,369.53 246.0,369.81 246.5,369.38 247.0,369.81 247.5,369.43 248.0,369.77 248.5,369.74 249.0,369.41 249.5,369.01 250.0,369.68 250.5,369.58 251.0,369.18 251.5,368.85 252.0,369.20 252.5,369.37 253.0,368.79 253.5,369.70 254.0,368.88 254.5,369.44 255.0,369.58 255.5,369.60 256.0,369.40 256.5,368.87 257.0,369.51 257.5,369.09 258.0,369.02 258.5,369.29 259.0,369.09 259.5,369.59 260.0,369.59 260.5,369.44 261.0,368.95 261.5,369.22 262.0,369.34 262.5,369.06 263.0,369.21 263.5,369.37 264.0,368.87 264.5,368.97 265.0,369.44 265.5,369.11 266.0,369.17 266.5,368.81 267.0,368.97 267.5,369.42 268.0,368.73 268.5,369.60 269.0,369.31 269.5,368.97 270.0,369.58 270.5,369.25 271.0,369.71 271.5,369.08 272.0,368.99 272.5,369.19 273.0,368.90 273.5,369.46 274.0,369.09 274.5,369.19 275.0,369.21 275.5,369.34 276.0,368.97 276.5,368.87 277.0,369.34 277.5,369.16 278.0,369.75 278.5,369.13 279.0,369.19 279.5,368.87 280.0,369.04 280.5,369.56 281.0,369.46 281.5,369.20 282.0,369.82 282.5,369.41 283.0,369.69 283.5,369.74 284.0,369.80 284.5,369.14 285.0,369.75 285.5,369.64 286.0,369.51 286.5,369.07 287.0,369.81 287.5,369.47 288.0,369.39 288.5,369.09 289.0,369.15 289.5,369.12 290.0,369.66 290.5,369.57 291.0,369.66 291.5,369.25 292.0,369.24 292.5,369.95 293.0,369.96 293.5,369.95 294.0,369.99 294.5,369.84 295.0,369.80 295.5,370.08 296.0,370.30 296.5,370.05 297.0,370.12 297.5,370.03 298.0,369.83 298.5,370.04 299.0,370.19 299.5,370.17 300.0,370.18 300.5,370.51 301.0,370.01 301.5,370.05 302.0,369.97 302.5,370.00 303.0,370.22 303.5,370.20 304.0,370.36 304.5,370.01 305.0,370.36 305.5,370.34 306.0,370.23 306.5,370.24 307.0,370.10 307.5,370.28 308.0,370.30 308.5,370.18 309.0,370.19 309.5,369.99 310.0,370.22 310.5,369.57 311.0,369.74 311.5,370.07 312.0,369.98 312.5,369.88 313.0,369.85 313.5,370.02 314.0,369.42 314.5,369.28 315.0,369.69 315.5,369.65 316.0,369.97 316.5,369.94 317.0,369.71 317.5,369.76 318.0,369.25 318.5,369.82 319.0,369.92 319.5,369.07 320.0,369.43 320.5,369.76 321.0,369.37 321.5,369.84 322.0,369.35 322.5,368.90 323.0,368.98 323.5,369.12 324.0,369.52 324.5,369.40 325.0,369.58 325.5,368.95 326.0,369.17 326.5,368.90 327.0,369.34 327.5,369.43 328.0,368.80 328.5,368.59 329.0,368.71 329.5,368.73 330.0,368.70 330.5,368.78 331.0,369.34 331.5,369.02 332.0,369.20 332.5,369.55 333.0,369.55 333.5,369.28 334.0,369.30 334.5,368.83 335.0,368.54 335.5,369.09 336.0,368.56 336.5,368.50 337.0,368.54 337.5,369.18 338.0,369.33 338.5,369.33 339.0,369.36 339.5,369.35 340.0,368.89 340.5,368.59 341.0,368.65 341.5,369.05 342.0,368.86 342.5,368.69 343.0,369.48 343.5,368.84 344.0,368.57 344.5,368.71 345.0,368.74 345.5,369.04 346.0,369.37 346.5,368.70 347.0,369.20 347.5,368.68 348.0,368.50 348.5,369.13 349.0,369.12 349.5,368.52 350.0,368.76 350.5,369.37 351.0,369.42 351.5,369.39 352.0,368.56 352.5,368.67 353.0,369.39 353.5,368.64 354.0,368.47 354.5,368.83 355.0,369.17 355.5,368.95 356.0,369.41 356.5,369.53 357.0,368.48 357.5,368.83 358.0,368.97 358.5,368.52 359.0,369.07 359.5,368.58 360.0,368.63 360.5,369.31 361.0,369.27 361.5,369.22 362.0,369.28 362.5,368.89 363.0,369.25 363.5,369.08 364.0,369.40 364.5,368.53 365.0,369.15 365.5,369.03 366.0,368.89 366.5,368.53 367.0,369.07 367.5,368.52 368.0,368.98 368.5,368.94 369.0,368.95 369.5,369.51 370.0,369.04 370.5,369.33 371.0,369.53 371.5,368.64 372.0,369.34 372.5,369.00 373.0,368.72 373.5,368.91 374.0,369.16 374.5,368.95 375.0,368.91 375.5,368.65 376.0,369.41 376.5,368.90 377.0,369.25 377.5,369.21 378.0,368.66 378.5,368.95 379.0,368.89 379.5,368.67 380.0,368.50 380.5,369.06 381.0,368.90 381.5,369.05 382.0,369.08 382.5,368.92 383.0,369.21 383.5,369.16 384.0,369.25 384.5,368.82 385.0,369.09 385.5,368.96 386.0,368.94 386.5,369.61 387.0,369.37 387.5,369.05 388.0,369.18 388.5,369.84 389.0,369.88 389.5,369.64 390.0,369.98 390.5,369.87 391.0,370.03 391.5,369.58 392.0,369.53 392.5,369.48 393.0,370.08 393.5,369.69 394.0,369.77 394.5,370.17 395.0,369.68 395.5,369.66 396.0,370.20 396.5,369.75 397.0,370.15 397.5,370.12 398.0,369.85 398.5,369.98 399.0,370.41 399.5,370.29 400.0,370.27 400.5,370.35 401.0,370.41 401.5,370.31 402.0,370.05 402.5,370.45 403.0,370.10 403.5,370.14 404.0,370.39 404.5,370.17 405.0,369.95 405.5,370.00 406.0,370.28 406.5,369.62 407.0,369.73 407.5,369.57 408.0,370.17 408.5,370.03 409.0,370.18 409.5,369.60 410.0,369.96 410.5,370.05 411.0,369.80 411.5,369.38 412.0,369.43 412.5,369.86 413.0,369.93 413.5,369.26 414.0,369.53 414.5,369.39 415.0,369.90 415.5,369.90 416.0,369.32 416.5,369.53 417.0,369.83 417.5,369.01 418.0,369.26 418.5,369.08 419.0,369.74 419.5,368.97 420.0,369.71 420.5,368.93 421.0,369.33 421.5,369.43 422.0,369.22 422.5,368.84 423.0,369.49 423.5,369.63 424.0,369.23 424.5,369.51 425.0,369.63 425.5,369.58 426.0,369.68 426.5,369.53 427.0,369.41 427.5,369.42 428.0,368.95 428.5,369.42 429.0,369.21 429.5,369.53 430.0,369.35 430.5,369.68 431.0,369.44 431.5,369.68 432.0,368.94 432.5,369.12 433.0,369.49 433.5,369.19 434.0,368.71 434.5,369.56 435.0,368.82 435.5,369.21 436.0,369.14 436.5,368.78 437.0,369.24 437.5,369.12 438.0,368.92 438.5,368.61 439.0,369.28 439.5,368.75 440.0,368.88 440.5,368.95 441.0,369.19 441.5,369.25 442.0,369.56 442.5,369.47 443.0,369.53 443.5,368.81 444.0,369.33 444.5,369.42 445.0,369.50 445.5,368.68 446.0,368.64 446.5,368.85 447.0,369.27 447.5,369.31 448.0,369.25 448.5,369.07 449.0,369.39 449.5,369.07 450.0,369.27 450.5,368.49 451.0,368.48 451.5,368.94 452.0,369.27 452.5,368.47 453.0,369.19 453.5,369.13 454.0,369.53 454.5,369.10 455.0,368.99 455.5,368.98 456.0,369.33 456.5,369.01 457.0,369.58 457.5,369.31 458.0,369.52 458.5,369.21 459.0,369.60 459.5,369.64 460.0,369.36 460.5,369.45 461.0,369.11 461.5,369.19 462.0,368.99 462.5,369.10 463.0,369.06 463.5,368.93 464.0,369.42 464.5,369.50 465.0,368.89 465.5,369.71 466.0,369.19 466.5,369.28 467.0,369.85 467.5,369.15 468.0,369.12 468.5,369.38 469.0,369.31 469.5,369.26 470.0,369.87 470.5,369.55 471.0,369.59 471.5,369.33 472.0,369.38 472.5,369.38 473.0,369.60 473.5,369.37 474.0,369.57 474.5,369.58 475.0,369.96 475.5,370.14 476.0,370.07 476.5,369.92 477.0,370.13 477.5,369.60 478.0,369.83 478.5,369.80 479.0,369.82 479.5,369.80 480.0,369.96 480.5,370.30 481.0,369.76 481.5,369.80 482.0,369.98 482.5,369.97 483.0,369.89 483.5,370.30 484.0,369.86 484.5,370.19 485.0,370.32 485.5,370.20 486.0,369.90 486.5,370.25 487.0,369.91 487.5,369.77 488.0,370.09 488.5,370.17 489.0,370.11 489.5,369.99 490.0,369.95 490.5,370.05 491.0,370.04 491.5,370.40 492.0,370.37 492.5,370.31 493.0,370.02 493.5,370.29 494.0,370.14 494.5,370.48 495.0,370.46 495.5,370.34 496.0,370.11 496.5,370.11 497.0,370.13 497.5,370.36 498.0,370.24 498.5,370.28 499.0,370.28 499.5,370.49 500.0,370.06 500.5,370.43 501.0,369.95 501.5,369.95 502.0,370.47 502.5,370.18 503.0,369.93 503.5,369.81 504.0,370.11 504.5,370.21 505.0,370.23 505.5,369.71 506.0,370.18 506.5,369.90 507.0,370.19 507.5,369.89 508.0,369.55 508.5,370.13 509.0,369.59 509.5,369.80 510.0,369.49 510.5,369.60 511.0,369.95 511.5,369.39 512.0,369.70 512.5,370.05 513.0,370.05 513.5,369.62 514.0,369.63 514.5,369.73 515.0,369.85 515.5,369.65 516.0,369.65 516.5,369.15 517.0,369.90 517.5,369.18 518.0,369.07 518.5,369.72 519.0,368.93 519.5,369.11 520.0,368.90 520.5,369.49 521.0,369.41 521.5,369.39 522.0,368.79 522.5,369.19 523.0,369.41 523.5,369.34 524.0,369.49 524.5,369.71 525.0,369.65 525.5,368.92 526.0,369.46 526.5,368.81 527.0,369.49 527.5,369.48 528.0,369.23 528.5,369.55 529.0,369.36 529.5,368.77 530.0,368.84 530.5,368.91 531.0,369.09 531.5,368.80 532.0,368.76 532.5,369.16 533.0,368.98 533.5,369.66 534.0,368.96 534.5,369.24 535.0,368.93 535.5,369.04 536.0,369.40 536.5,369.64 537.0,368.74 537.5,369.56 538.0,369.20 538.5,369.33 539.0,369.37 539.5,368.91 540.0,368.66 540.5,369.40 541.0,368.99 541.5,369.36 542.0,369.09 542.5,369.25 543.0,369.49 543.5,369.49 544.0,369.44 544.5,368.70 545.0,369.13 545.5,369.45 546.0,368.79 546.5,368.74 547.0,369.33 547.5,369.67 548.0,369.65 548.5,369.78 549.0,369.58 549.5,369.84 550.0,369.74 550.5,369.76 551.0,369.53 551.5,369.30 552.0,369.46 552.5,369.77 553.0,369.81 553.5,369.76 554.0,369.91 554.5,369.98 555.0,370.21 555.5,370.09 556.0,369.65 556.5,370.26 557.0,370.05 557.5,370.00 558.0,369.90 558.5,370.34 559.0,370.34 559.5,370.39 560.0,370.34 560.5,370.27 561.0,369.93 561.5,369.94 562.0,369.88 562.5,370.38 563.0,370.34 563.5,369.85 564.0,369.67 564.5,369.93 565.0,369.80 565.5,370.20 566.0,369.87 566.5,369.41 567.0,369.44 567.5,369.37 568.0,369.22 568.5,369.79 569.0,369.88 569.5,369.80 570.0,369.43 570.5,369.24 571.0,368.96 571.5,369.12 572.0,369.15 572.5,368.98 573.0,369.25 573.5,369.11 574.0,369.61 574.5,368.78 575.0,369.33 575.5,368.60 576.0,368.91 576.5,369.28 577.0,369.48 577.5,369.36 578.0,368.96 578.5,368.91 579.0,369.53 579.5,369.59 580.0,369.12 580.5,369.07 581.0,369.29 581.5,369.46 582.0,369.09 582.5,369.70 583.0,369.41 583.5,369.26 584.0,368.77 584.5,369.10 585.0,368.87 585.5,369.29 586.0,369.54 586.5,369.53 587.0,368.85 587.5,369.11 588.0,369.50 588.5,369.79 589.0,369.34 589.5,369.18 590.0,369.44 590.5,369.60 591.0,369.22 591.5,368.99 592.0,369.66 592.5,369.85 593.0,369.57 593.5,369.51 594.0,369.28 594.5,369.73 595.0,369.20 595.5,369.26 596.0,369.48 596.5,369.76 597.0,369.09 597.5,369.69 598.0,369.25 598.5,369.78 599.0,369.79 599.5,369.34 600.0,369.75 600.5,369.20 601.0,369.60 601.5,369.87 602.0,369.85 602.5,369.70 603.0,369.50 603.5,369.28 604.0,369.95 604.5,369.76 605.0,369.91 605.5,369.31 606.0,369.99 606.5,370.07 607.0,370.07 607.5,369.82 608.0,369.43 608.5,369.45 609.0,369.58 609.5,369.39 609.5,373.81 609.0,373.62 608.5,373.75 608.0,373.77 607.5,373.38 607.0,373.13 606.5,373.13 606.0,373.21 605.5,373.89 605.0,373.29 604.5,373.44 604.0,373.25 603.5,373.92 603.0,373.70 602.5,373.50 602.0,373.35 601.5,373.33 601.0,373.60 600.5,374.00 600.0,373.45 599.5,373.86 599.0,373.41 598.5,373.42 598.0,373.95 597.5,373.51 597.0,374.11 596.5,373.44 596.0,373.72 595.5,373.94 595.0,374.00 594.5,373.47 594.0,373.92 593.5,373.69 593.0,373.63 592.5,373.35 592.0,373.54 591.5,374.21 591.0,373.98 590.5,373.60 590.0,373.76 589.5,374.02 589.0,373.86 588.5,373.41 588.0,373.70 587.5,374.09 587.0,374.35 586.5,373.67 586.0,373.66 585.5,373.91 585.0,374.33 584.5,374.10 584.0,374.43 583.5,373.94 583.0,373.79 582.5,373.50 582.0,374.11 581.5,373.74 581.0,373.91 580.5,374.13 580.0,374.08 579.5,373.61 579.0,373.67 578.5,374.29 578.0,374.24 577.5,373.84 577.0,373.72 576.5,373.92 576.0,374.29 575.5,374.60 575.0,373.87 574.5,374.42 574.0,373.59 573.5,374.09 573.0,373.95 572.5,374.22 572.0,374.05 571.5,374.08 571.0,374.24 570.5,373.96 570.0,373.77 569.5,373.40 569.0,373.32 568.5,373.41 568.0,373.98 567.5,373.83 567.0,373.76 566.5,373.79 566.0,373.33 565.5,373.00 565.0,373.40 564.5,373.27 564.0,373.53 563.5,373.35 563.0,372.86 562.5,372.82 562.0,373.32 561.5,373.26 561.0,373.27 560.5,372.93 560.0,372.86 559.5,372.81 559.0,372.86 558.5,372.86 558.0,373.30 557.5,373.20 557.0,373.15 556.5,372.94 556.0,373.55 555.5,373.11 555.0,372.99 554.5,373.22 554.0,373.29 553.5,373.44 553.0,373.39 552.5,373.43 552.0,373.74 551.5,373.90 551.0,373.67 550.5,373.44 550.0,373.46 549.5,373.36 549.0,373.62 548.5,373.42 548.0,373.55 547.5,373.53 547.0,373.87 546.5,374.46 546.0,374.41 545.5,373.75 545.0,374.07 544.5,374.50 544.0,373.76 543.5,373.71 543.0,373.71 542.5,373.95 542.0,374.11 541.5,373.84 541.0,374.21 540.5,373.80 540.0,374.54 539.5,374.29 539.0,373.83 538.5,373.87 538.0,374.00 537.5,373.64 537.0,374.46 536.5,373.56 536.0,373.80 535.5,374.16 535.0,374.27 534.5,373.96 534.0,374.24 533.5,373.54 533.0,374.22 532.5,374.04 532.0,374.44 531.5,374.40 531.0,374.11 530.5,374.29 530.0,374.36 529.5,374.43 529.0,373.84 528.5,373.65 528.0,373.97 527.5,373.72 527.0,373.71 526.5,374.39 526.0,373.74 525.5,374.28 525.0,373.55 524.5,373.49 524.0,373.71 523.5,373.86 523.0,373.79 522.5,374.01 522.0,374.41 521.5,373.81 521.0,373.79 520.5,373.71 520.0,374.30 519.5,374.09 519.0,374.27 518.5,373.48 518.0,374.13 517.5,374.02 517.0,373.30 516.5,374.05 516.0,373.55 515.5,373.55 515.0,373.35 514.5,373.47 514.0,373.57 513.5,373.58 513.0,373.15 512.5,373.15 512.0,373.50 511.5,373.81 511.0,373.25 510.5,373.60 510.0,373.71 509.5,373.40 509.0,373.61 508.5,373.07 508.0,373.65 507.5,373.31 507.0,373.01 506.5,373.30 506.0,373.02 505.5,373.49 505.0,372.97 504.5,372.99 504.0,373.09 503.5,373.39 503.0,373.27 502.5,373.02 502.0,372.73 501.5,373.25 501.0,373.25 500.5,372.77 500.0,373.14 499.5,372.71 499.0,372.92 498.5,372.92 498.0,372.96 497.5,372.84 497.0,373.07 496.5,373.09 496.0,373.09 495.5,372.86 495.0,372.74 494.5,372.72 494.0,373.06 493.5,372.91 493.0,373.18 492.5,372.89 492.0,372.83 491.5,372.80 491.0,373.16 490.5,373.15 490.0,373.25 489.5,373.21 489.0,373.09 488.5,373.03 488.0,373.11 487.5,373.43 487.0,373.29 486.5,372.95 486.0,373.30 485.5,373.00 485.0,372.88 484.5,373.01 484.0,373.34 483.5,372.90 483.0,373.31 482.5,373.23 482.0,373.22 481.5,373.40 481.0,373.44 480.5,372.90 480.0,373.24 479.5,373.40 479.0,373.38 478.5,373.40 478.0,373.37 477.5,373.60 477.0,373.07 476.5,373.28 476.0,373.13 475.5,373.06 475.0,373.24 474.5,373.62 474.0,373.63 473.5,373.83 473.0,373.60 472.5,373.82 472.0,373.82 471.5,373.87 471.0,373.61 470.5,373.65 470.0,373.33 469.5,373.94 469.0,373.89 468.5,373.82 468.0,374.08 467.5,374.05 467.0,373.35 466.5,373.92 466.0,374.01 465.5,373.49 465.0,374.31 464.5,373.70 464.0,373.78 463.5,374.27 463.0,374.14 462.5,374.10 462.0,374.21 461.5,374.01 461.0,374.09 460.5,373.75 460.0,373.84 459.5,373.56 459.0,373.60 458.5,373.99 458.0,373.68 457.5,373.89 457.0,373.62 456.5,374.19 456.0,373.87 455.5,374.22 455.0,374.21 454.5,374.10 454.0,373.67 453.5,374.07 453.0,374.01 452.5,374.73 452.0,373.93 451.5,374.26 451.0,374.72 450.5,374.71 450.0,373.93 449.5,374.13 449.0,373.81 448.5,374.13 448.0,373.95 447.5,373.89 447.0,373.93 446.5,374.35 446.0,374.56 445.5,374.52 445.0,373.70 444.5,373.78 444.0,373.87 443.5,374.39 443.0,373.67 442.5,373.73 442.0,373.64 441.5,373.95 441.0,374.01 440.5,374.25 440.0,374.32 439.5,374.45 439.0,373.92 438.5,374.59 438.0,374.28 437.5,374.08 437.0,373.96 436.5,374.42 436.0,374.06 435.5,373.99 435.0,374.38 434.5,373.64 434.0,374.49 433.5,374.01 433.0,373.71 432.5,374.08 432.0,374.26 431.5,373.52 431.0,373.76 430.5,373.52 430.0,373.85 429.5,373.67 429.0,373.99 428.5,373.78 428.0,374.25 427.5,373.78 427.0,373.79 426.5,373.67 426.0,373.52 425.5,373.62 425.0,373.57 424.5,373.69 424.0,373.97 423.5,373.57 423.0,373.71 422.5,374.36 422.0,373.98 421.5,373.77 421.0,373.87 420.5,374.27 420.0,373.49 419.5,374.23 419.0,373.46 418.5,374.12 418.0,373.94 417.5,374.19 417.0,373.37 416.5,373.67 416.0,373.88 415.5,373.30 415.0,373.30 414.5,373.81 414.0,373.67 413.5,373.94 413.0,373.27 412.5,373.34 412.0,373.77 411.5,373.82 411.0,373.40 410.5,373.15 410.0,373.24 409.5,373.60 409.0,373.02 408.5,373.17 408.0,373.03 407.5,373.63 407.0,373.47 406.5,373.58 406.0,372.92 405.5,373.20 405.0,373.25 404.5,373.03 404.0,372.81 403.5,373.06 403.0,373.10 402.5,372.75 402.0,373.15 401.5,372.89 401.0,372.79 400.5,372.85 400.0,372.93 399.5,372.91 399.0,372.79 398.5,373.22 398.0,373.35 397.5,373.08 397.0,373.05 396.5,373.45 396.0,373.00 395.5,373.54 395.0,373.52 394.5,373.03 394.0,373.43 393.5,373.51 393.0,373.12 392.5,373.72 392.0,373.67 391.5,373.62 391.0,373.17 390.5,373.33 390.0,373.22 389.5,373.56 389.0,373.32 388.5,373.36 388.0,374.02 387.5,374.15 387.0,373.83 386.5,373.59 386.0,374.26 385.5,374.24 385.0,374.11 384.5,374.38 384.0,373.95 383.5,374.04 383.0,373.99 382.5,374.28 382.0,374.12 381.5,374.15 381.0,374.30 380.5,374.14 380.0,374.70 379.5,374.53 379.0,374.31 378.5,374.25 378.0,374.54 377.5,373.99 377.0,373.95 376.5,374.30 376.0,373.79 375.5,374.55 375.0,374.29 374.5,374.25 374.0,374.04 373.5,374.29 373.0,374.48 372.5,374.20 372.0,373.86 371.5,374.56 371.0,373.67 370.5,373.87 370.0,374.16 369.5,373.69 369.0,374.25 368.5,374.26 368.0,374.22 367.5,374.68 367.0,374.13 366.5,374.67 366.0,374.31 365.5,374.17 365.0,374.05 364.5,374.67 364.0,373.80 363.5,374.12 363.0,373.95 362.5,374.31 362.0,373.92 361.5,373.98 361.0,373.93 360.5,373.89 360.0,374.57 359.5,374.62 359.0,374.13 358.5,374.68 358.0,374.23 357.5,374.37 357.0,374.72 356.5,373.67 356.0,373.79 355.5,374.25 355.0,374.03 354.5,374.37 354.0,374.73 353.5,374.56 353.0,373.81 352.5,374.53 352.0,374.64 351.5,373.81 351.0,373.78 350.5,373.83 350.0,374.44 349.5,374.68 349.0,374.08 348.5,374.07 348.0,374.70 347.5,374.52 347.0,374.00 346.5,374.50 346.0,373.83 345.5,374.16 345.0,374.46 344.5,374.49 344.0,374.63 343.5,374.36 343.0,373.72 342.5,374.51 342.0,374.34 341.5,374.15 341.0,374.55 340.5,374.61 340.0,374.31 339.5,373.85 339.0,373.84 338.5,373.87 338.0,373.87 337.5,374.02 337.0,374.66 336.5,374.70 336.0,374.64 335.5,374.11 335.0,374.66 334.5,374.37 334.0,373.90 333.5,373.92 333.0,373.65 332.5,373.65 332.0,374.00 331.5,374.18 331.0,373.86 330.5,374.42 330.0,374.50 329.5,374.47 329.0,374.49 328.5,374.61 328.0,374.40 327.5,373.77 327.0,373.86 326.5,374.30 326.0,374.03 325.5,374.25 325.0,373.62 324.5,373.80 324.0,373.68 323.5,374.08 323.0,374.22 322.5,374.30 322.0,373.85 321.5,373.36 321.0,373.83 320.5,373.44 320.0,373.77 319.5,374.13 319.0,373.28 318.5,373.38 318.0,373.95 317.5,373.44 317.0,373.49 316.5,373.26 316.0,373.23 315.5,373.55 315.0,373.51 314.5,373.92 314.0,373.78 313.5,373.18 313.0,373.35 312.5,373.32 312.0,373.22 311.5,373.13 311.0,373.46 310.5,373.63 310.0,372.98 309.5,373.21 309.0,373.01 308.5,373.02 308.0,372.90 307.5,372.92 307.0,373.10 306.5,372.96 306.0,372.97 305.5,372.86 305.0,372.84 304.5,373.19 304.0,372.84 303.5,373.00 303.0,372.98 302.5,373.20 302.0,373.23 301.5,373.15 301.0,373.19 300.5,372.69 300.0,373.02 299.5,373.03 299.0,373.01 298.5,373.16 298.0,373.37 297.5,373.17 297.0,373.08 296.5,373.15 296.0,372.90 295.5,373.12 295.0,373.40 294.5,373.36 294.0,373.21 293.5,373.25 293.0,373.24 292.5,373.25 292.0,373.96 291.5,373.95 291.0,373.54 290.5,373.63 290.0,373.54 289.5,374.08 289.0,374.05 288.5,374.11 288.0,373.81 287.5,373.73 287.0,373.39 286.5,374.13 286.0,373.69 285.5,373.56 285.0,373.45 284.5,374.06 284.0,373.40 283.5,373.46 283.0,373.51 282.5,373.79 282.0,373.38 281.5,374.00 281.0,373.74 280.5,373.64 280.0,374.16 279.5,374.33 279.0,374.01 278.5,374.07 278.0,373.45 277.5,374.04 277.0,373.86 276.5,374.33 276.0,374.23 275.5,373.86 275.0,373.99 274.5,374.01 274.0,374.11 273.5,373.74 273.0,374.30 272.5,374.01 272.0,374.21 271.5,374.12 271.0,373.49 270.5,373.95 270.0,373.62 269.5,374.23 269.0,373.89 268.5,373.60 268.0,374.47 267.5,373.78 267.0,374.23 266.5,374.39 266.0,374.03 265.5,374.09 265.0,373.76 264.5,374.23 264.0,374.33 263.5,373.83 263.0,373.99 262.5,374.14 262.0,373.86 261.5,373.98 261.0,374.25 260.5,373.76 260.0,373.61 259.5,373.61 259.0,374.11 258.5,373.91 258.0,374.18 257.5,374.11 257.0,373.69 256.5,374.33 256.0,373.80 255.5,373.60 255.0,373.62 254.5,373.76 254.0,374.32 253.5,373.50 253.0,374.41 252.5,373.83 252.0,374.00 251.5,374.35 251.0,374.02 250.5,373.62 250.0,373.52 249.5,374.19 249.0,373.79 248.5,373.46 248.0,373.43 247.5,373.77 247.0,373.39 246.5,373.82 246.0,373.39 245.5,373.67 245.0,373.82 244.5,373.38 244.0,373.90 243.5,373.44 243.0,373.58" fill="#1b5e1b"/>
<polygon points="609.5,369.39 610.0,369.45 610.5,369.91 611.0,370.02 611.5,369.43 612.0,369.57 612.5,370.12 613.0,369.62 613.5,369.84 614.0,369.84 614.5,369.87 615.0,369.99 615.5,370.12 616.0,369.89 616.5,369.83 617.0,369.34 617.5,370.01 618.0,369.32 618.5,369.93 619.0,369.80 619.5,369.42 620.0,369.41 620.5,369.72 621.0,370.03 621.5,369.68 622.0,369.76 622.5,369.30 623.0,369.90 623.5,369.75 624.0,369.30 624.5,370.02 625.0,369.69 625.5,369.35 626.0,369.38 626.5,369.99 627.0,369.99 627.5,369.97 628.0,369.23 628.5,369.79 629.0,369.36 629.5,369.23 630.0,369.70 630.5,369.76 631.0,369.16 631.5,369.45 632.0,369.75 632.5,369.35 633.0,369.69 633.5,369.72 634.0,369.96 634.5,369.29 635.0,369.14 635.5,369.39 636.0,369.10 636.5,369.92 637.0,369.73 637.5,369.50 638.0,369.07 638.5,369.06 639.0,369.57 639.5,369.69 640.0,369.52 640.5,369.45 641.0,369.05 641.5,369.72 642.0,369.15 642.5,369.20 643.0,369.11 643.5,369.15 644.0,369.30 644.5,369.55 645.0,369.55 645.5,369.51 646.0,369.10 646.5,369.76 647.0,369.64 647.5,369.10 648.0,369.58 648.5,369.75 649.0,369.77 649.5,369.27 650.0,369.48 650.5,368.84 651.0,368.92 651.5,368.81 652.0,369.51 652.5,369.68 653.0,369.67 653.5,369.26 654.0,369.04 654.5,369.30 655.0,369.50 655.5,369.31 656.0,369.10 656.5,369.04 657.0,368.96 657.5,368.85 658.0,369.03 658.5,369.58 659.0,368.83 659.5,369.39 660.0,369.10 660.5,369.29 661.0,368.90 661.5,369.46 662.0,369.40 662.5,369.40 663.0,369.49 663.5,368.71 664.0,369.03 664.5,369.29 665.0,369.20 665.5,368.56 666.0,369.07 666.5,369.36 667.0,368.73 667.5,368.89 668.0,368.52 668.5,369.47 669.0,369.06 669.5,368.68 670.0,368.65 670.5,368.56 671.0,369.51 671.5,369.23 672.0,369.41 672.5,369.33 673.0,368.45 673.5,368.88 674.0,368.48 674.5,369.10 675.0,368.54 675.5,369.00 676.0,369.21 676.5,368.61 677.0,368.41 677.5,369.36 678.0,368.80 678.5,368.76 679.0,369.22 679.5,369.04 680.0,369.29 680.5,369.22 681.0,369.17 681.5,368.78 682.0,368.73 682.5,369.25 683.0,369.47 683.5,369.12 684.0,368.72 684.5,369.29 685.0,369.15 685.5,369.28 686.0,368.62 686.5,368.90 687.0,369.45 687.5,369.42 688.0,369.09 688.5,368.93 689.0,368.83 689.5,369.45 690.0,369.37 690.5,368.79 691.0,369.11 691.5,369.26 692.0,369.24 692.5,368.54 693.0,369.24 693.5,368.97 694.0,369.21 694.5,369.15 695.0,368.67 695.5,368.54 696.0,369.22 696.5,369.41 697.0,368.84 697.5,369.41 698.0,369.62 698.5,368.68 699.0,369.19 699.5,368.78 700.0,369.22 700.5,368.73 701.0,369.17 701.0,374.03 700.5,374.47 700.0,373.98 699.5,374.42 699.0,374.01 698.5,374.52 698.0,373.58 697.5,373.79 697.0,374.36 696.5,373.79 696.0,373.98 695.5,374.66 695.0,374.53 694.5,374.05 694.0,373.99 693.5,374.23 693.0,373.96 692.5,374.66 692.0,373.96 691.5,373.94 691.0,374.09 690.5,374.41 690.0,373.83 689.5,373.75 689.0,374.37 688.5,374.27 688.0,374.11 687.5,373.78 687.0,373.75 686.5,374.30 686.0,374.58 685.5,373.92 685.0,374.05 684.5,373.91 684.0,374.48 683.5,374.08 683.0,373.73 682.5,373.95 682.0,374.47 681.5,374.42 681.0,374.03 680.5,373.98 680.0,373.91 679.5,374.16 679.0,373.98 678.5,374.44 678.0,374.40 677.5,373.84 677.0,374.79 676.5,374.59 676.0,373.99 675.5,374.20 675.0,374.66 674.5,374.10 674.0,374.72 673.5,374.32 673.0,374.75 672.5,373.87 672.0,373.79 671.5,373.97 671.0,373.69 670.5,374.64 670.0,374.55 669.5,374.52 669.0,374.14 668.5,373.73 668.0,374.68 667.5,374.31 667.0,374.47 666.5,373.84 666.0,374.13 665.5,374.64 665.0,374.00 664.5,373.91 664.0,374.17 663.5,374.49 663.0,373.71 662.5,373.80 662.0,373.80 661.5,373.74 661.0,374.30 660.5,373.91 660.0,374.10 659.5,373.81 659.0,374.37 658.5,373.62 658.0,374.17 657.5,374.35 657.0,374.24 656.5,374.16 656.0,374.10 655.5,373.89 655.0,373.70 654.5,373.90 654.0,374.16 653.5,373.94 653.0,373.53 652.5,373.52 652.0,373.69 651.5,374.39 651.0,374.28 650.5,374.36 650.0,373.72 649.5,373.93 649.0,373.43 648.5,373.45 648.0,373.62 647.5,374.10 647.0,373.56 646.5,373.44 646.0,374.10 645.5,373.69 645.0,373.65 644.5,373.65 644.0,373.90 643.5,374.05 643.0,374.09 642.5,374.00 642.0,374.05 641.5,373.48 641.0,374.15 640.5,373.75 640.0,373.68 639.5,373.51 639.0,373.63 638.5,374.14 638.0,374.13 637.5,373.70 637.0,373.47 636.5,373.28 636.0,374.10 635.5,373.81 635.0,374.06 634.5,373.91 634.0,373.24 633.5,373.48 633.0,373.51 632.5,373.85 632.0,373.45 631.5,373.75 631.0,374.04 630.5,373.44 630.0,373.50 629.5,373.97 629.0,373.84 628.5,373.41 628.0,373.97 627.5,373.23 627.0,373.21 626.5,373.21 626.0,373.82 625.5,373.85 625.0,373.51 624.5,373.18 624.0,373.90 623.5,373.45 623.0,373.30 622.5,373.90 622.0,373.44 621.5,373.52 621.0,373.17 620.5,373.48 620.0,373.79 619.5,373.78 619.0,373.40 618.5,373.27 618.0,373.88 617.5,373.19 617.0,373.86 616.5,373.37 616.0,373.31 615.5,373.08 615.0,373.21 614.5,373.33 614.0,373.36 613.5,373.36 613.0,373.58 612.5,373.08 612.0,373.63 611.5,373.77 611.0,373.18 610.5,373.29 610.0,373.75 609.5,373.81" fill="#0b840b"/>
<polygon points="701.0,369.17 701.5,369.48 702.0,369.64 702.5,369.08 703.0,368.99 703.5,368.71 704.0,369.57 704.5,369.02 705.0,369.28 705.5,369.14 706.0,369.52 706.5,369.38 707.0,369.13 707.5,368.72 708.0,369.56 708.5,369.17 709.0,368.85 709.5,368.68 710.0,369.48 710.5,369.56 711.0,368.72 711.5,368.69 712.0,369.19 712.5,369.64 713.0,368.74 713.5,369.30 714.0,368.77 714.5,369.06 715.0,368.86 715.5,369.54 716.0,368.90 716.5,369.48 717.0,369.30 717.5,368.85 718.0,368.87 718.5,369.53 719.0,369.49 719.5,369.31 720.0,369.19 720.5,369.33 721.0,369.60 721.5,369.47 722.0,368.99 722.5,368.82 723.0,369.69 723.5,369.16 724.0,368.97 724.5,369.70 725.0,368.89 725.5,369.62 726.0,369.14 726.5,369.19 727.0,369.12 727.5,369.44 728.0,369.33 728.5,369.17 729.0,369.32 729.5,369.09 730.0,369.31 730.5,369.32 731.0,369.73 731.5,369.14 732.0,369.27 732.5,369.53 733.0,369.01 733.5,368.99 734.0,369.31 734.5,369.59 735.0,369.30 735.5,369.67 736.0,369.65 736.5,369.35 737.0,369.69 737.5,369.34 738.0,369.28 738.0,373.92 737.5,373.86 737.0,373.51 736.5,373.85 736.0,373.55 735.5,373.53 735.0,373.90 734.5,373.61 734.0,373.89 733.5,374.21 733.0,374.19 732.5,373.67 732.0,373.93 731.5,374.06 731.0,373.47 730.5,373.88 730.0,373.89 729.5,374.11 729.0,373.88 728.5,374.03 728.0,373.87 727.5,373.76 727.0,374.08 726.5,374.01 726.0,374.06 725.5,373.58 725.0,374.31 724.5,373.50 724.0,374.23 723.5,374.04 723.0,373.51 722.5,374.38 722.0,374.21 721.5,373.73 721.0,373.60 720.5,373.87 720.0,374.01 719.5,373.89 719.0,373.71 718.5,373.67 718.0,374.33 717.5,374.35 717.0,373.90 716.5,373.72 716.0,374.30 715.5,373.66 715.0,374.34 714.5,374.14 714.0,374.43 713.5,373.90 713.0,374.46 712.5,373.56 712.0,374.01 711.5,374.51 711.0,374.48 710.5,373.64 710.0,373.72 709.5,374.52 709.0,374.35 708.5,374.03 708.0,373.64 707.5,374.48 707.0,374.07 706.5,373.82 706.0,373.68 705.5,374.06 705.0,373.92 704.5,374.18 704.0,373.63 703.5,374.49 703.0,374.21 702.5,374.12 702.0,373.56 701.5,373.72 701.0,374.03" fill="#1b5e1b"/>
<rect x="609.5" y="357.5" width="91.5" height="28" rx="3" fill="none" stroke="#4a8cc4" stroke-width="1" />
<rect x="625.6" y="357.5" width="1.3" height="28.5" rx="0" fill="#f01c1c" />
<rect x="241.9" y="391.7" width="12.8" height="12.9" rx="2" fill="#303030" />
<text x="242.8" y="402.2" font-family="Liberation Sans" font-size="10.2" font-weight="400" fill="#dedede" textLength="11.0" lengthAdjust="spacingAndGlyphs" >00</text>
<rect x="256.90000000000003" y="391.7" width="12.8" height="12.9" rx="2" fill="#303030" />
<text x="257.8" y="402.2" font-family="Liberation Sans" font-size="10.2" font-weight="400" fill="#dedede" textLength="11.0" lengthAdjust="spacingAndGlyphs" >04</text>
<rect x="272.1" y="391.7" width="12.8" height="12.9" rx="2" fill="#303030" />
<text x="273.0" y="402.2" font-family="Liberation Sans" font-size="10.2" font-weight="400" fill="#dedede" textLength="11.0" lengthAdjust="spacingAndGlyphs" >03</text>
<rect x="287.5" y="391.7" width="12.8" height="12.9" rx="2" fill="#303030" />
<text x="288.4" y="402.2" font-family="Liberation Sans" font-size="10.2" font-weight="400" fill="#dedede" textLength="11.0" lengthAdjust="spacingAndGlyphs" >24</text>
<text x="316.4" y="401.6" font-family="Liberation Sans" font-size="9.2" font-weight="400" fill="#dcdcdc" textLength="10.0" lengthAdjust="spacingAndGlyphs" >x1</text>
<rect x="332" y="397.3" width="50" height="2.6" rx="1.3" fill="#181818" />
<rect x="332" y="397.3" width="25.5" height="2.6" rx="1.3" fill="#4a9fe3" />
<circle cx="357.5" cy="398.3" r="3.7" fill="#4a9fe3"/>
<rect x="390" y="391.2" width="27.5" height="13.8" rx="4" fill="#2e2e2e" />
<text x="403.7" y="401.8" font-family="Liberation Sans" font-size="10" font-weight="400" fill="#e6e6e6" text-anchor="middle">[&lt;</text>
<rect x="422" y="391.2" width="14.199999999999989" height="13.8" rx="4" fill="#2e2e2e" />
<text x="429.1" y="401.8" font-family="Liberation Sans" font-size="10" font-weight="400" fill="#e6e6e6" text-anchor="middle">[</text>
<rect x="440.8" y="391.2" width="27.0" height="13.8" rx="4" fill="#2e2e2e" />
<path d="M450.5,394 L458.5,398.3 L450.5,402.6 Z" fill="#f0f0f0"/>
<rect x="472.8" y="391.2" width="14.199999999999989" height="13.8" rx="4" fill="#2e2e2e" />
<text x="479.9" y="401.8" font-family="Liberation Sans" font-size="10" font-weight="400" fill="#e6e6e6" text-anchor="middle">&lt;</text>
<rect x="493.6" y="391.2" width="14.199999999999989" height="13.8" rx="4" fill="#2e2e2e" />
<text x="500.7" y="401.8" font-family="Liberation Sans" font-size="10" font-weight="400" fill="#e6e6e6" text-anchor="middle">&gt;</text>
<rect x="512.7" y="391.2" width="27.09999999999991" height="13.8" rx="4" fill="#2e2e2e" />
<rect x="523" y="394.8" width="7.3" height="7" rx="0" fill="#f4f4f4" />
<rect x="544.5" y="391.2" width="13.899999999999977" height="13.8" rx="4" fill="#2e2e2e" />
<text x="551.5" y="401.8" font-family="Liberation Sans" font-size="10" font-weight="400" fill="#e6e6e6" text-anchor="middle">]</text>
<rect x="563.3" y="391.2" width="27.100000000000023" height="13.8" rx="4" fill="#2e2e2e" />
<text x="576.8" y="401.8" font-family="Liberation Sans" font-size="10" font-weight="400" fill="#e6e6e6" text-anchor="middle">&gt;]</text>
<path d="M598.7,398.7 L603.1,395.5 V401.9 Z" fill="none" stroke="#e4e4e4" stroke-width="1.3" stroke-linejoin="round"/>
<path d="M605.6,395.6 Q607.0,397.2 605.8,398.7 Q604.9,400.2 606.3,402.2 M607.2,395.3 Q608.8,398.6 607.4,402.4" fill="none" stroke="#d8d8d8" stroke-width="1.0"/>
<rect x="614" y="397.3" width="50.3" height="2.6" rx="1.3" fill="#181818" />
<rect x="614" y="397.3" width="34.2" height="2.6" rx="1.3" fill="#4a9fe3" />
<circle cx="648.2" cy="398.3" r="3.7" fill="#4a9fe3"/>
<rect x="679.7" y="392" width="12.8" height="12.6" rx="2" fill="#303030" />
<text x="680.6" y="402.2" font-family="Liberation Sans" font-size="10.2" font-weight="400" fill="#dedede" textLength="11.0" lengthAdjust="spacingAndGlyphs" >00</text>
<rect x="694.7" y="392" width="12.8" height="12.6" rx="2" fill="#303030" />
<text x="695.6" y="402.2" font-family="Liberation Sans" font-size="10.2" font-weight="400" fill="#dedede" textLength="11.0" lengthAdjust="spacingAndGlyphs" >05</text>
<rect x="710.1" y="392" width="12.8" height="12.6" rx="2" fill="#303030" />
<text x="711.0" y="402.2" font-family="Liberation Sans" font-size="10.2" font-weight="400" fill="#dedede" textLength="11.0" lengthAdjust="spacingAndGlyphs" >03</text>
<rect x="725.1" y="392" width="12.8" height="12.6" rx="2" fill="#303030" />
<text x="726.0" y="402.2" font-family="Liberation Sans" font-size="10.2" font-weight="400" fill="#dedede" textLength="11.0" lengthAdjust="spacingAndGlyphs" >20</text>
<circle cx="246.4" cy="417.8" r="4.3" fill="#383838"/>
<text x="254.2" y="420.8" font-family="Liberation Sans" font-size="9.2" font-weight="400" fill="#dcdcdc" textLength="101.2" lengthAdjust="spacingAndGlyphs" >Afficher le timecode video</text>
<circle cx="367.2" cy="418" r="4.3" fill="#383838"/>
<text x="375.1" y="421" font-family="Liberation Sans" font-size="9.2" font-weight="400" fill="#dcdcdc" textLength="92.3" lengthAdjust="spacingAndGlyphs" >Audio image par image</text>
<circle cx="487.9" cy="418.4" r="4.3" fill="#3a3a3a"/>
<path d="M485.2,418.5 L487.09999999999997,420.7 L490.9,415.4" fill="none" stroke="#4a9fe3" stroke-width="1.5" stroke-linecap="round" stroke-linejoin="round"/>
<text x="495.6" y="421" font-family="Liberation Sans" font-size="9.2" font-weight="400" fill="#dcdcdc" textLength="80.8" lengthAdjust="spacingAndGlyphs" >Afficher l'onde audio</text>
<circle cx="588" cy="418" r="4.3" fill="#383838"/>
<text x="596.6" y="421" font-family="Liberation Sans" font-size="9.2" font-weight="400" fill="#dcdcdc" textLength="35.8" lengthAdjust="spacingAndGlyphs" >Vu-mètre</text>
<text x="637.6" y="421" font-family="Liberation Sans" font-size="9.2" font-weight="400" fill="#dcdcdc" textLength="29.4" lengthAdjust="spacingAndGlyphs" >Mode :</text>
<rect x="670.7" y="410" width="53.0" height="14" rx="3" fill="#2e2e2e" />
<path d="M714.4,415.0 L720.4,415.0 L717.4,419.0 Z" fill="#eeeeee"/>
<text x="671.6" y="419.6" font-family="Liberation Sans" font-size="8.4" font-weight="400" fill="#dddddd" textLength="26.8" lengthAdjust="spacingAndGlyphs" >Couper</text>
<path d="M727.6,417.1 Q733.6,410.0 739.6,417.1 Q733.6,424.2 727.6,417.1 Z" fill="#eeeeee"/>
<circle cx="733.6" cy="417.1" r="2.3" fill="#202020"/>
<circle cx="732.7" cy="416.2" r="0.6" fill="#bbbbbb"/>
<rect x="747.5" y="28.0" width="222.5" height="66.8" rx="3" fill="none" stroke="#2f2f2f" stroke-width="1" />
<rect x="748.2" y="25.5" width="33.5" height="5" rx="0" fill="#232323" />
<text x="750.8" y="31.2" font-family="Liberation Sans" font-size="9.2" font-weight="700" fill="#e2e2e2" textLength="28.3" lengthAdjust="spacingAndGlyphs" >Image</text>
<text x="753.9" y="45.6" font-family="Liberation Sans" font-size="9.4" font-weight="400" fill="#dcdcdc" textLength="26.7" lengthAdjust="spacingAndGlyphs" >Taille :</text>
<rect x="788.4" y="36.2" width="83.10000000000002" height="14.299999999999997" rx="3" fill="#2e2e2e" />
<rect x="857.5" y="36.2" width="1" height="14.299999999999997" rx="0" fill="#4a4a4a" />
<path d="M862.3,41.35 L868.3,41.35 L865.3,45.35 Z" fill="#eeeeee"/>
<text x="789.2" y="46.4" font-family="Liberation Sans" font-size="8.6" font-weight="400" fill="#dddddd" textLength="25.8" lengthAdjust="spacingAndGlyphs" >Source</text>
<path d="M879.6,41.6 Q879.6,38.6 882.6,38.6 M887.8,38.6 Q890.8,38.6 890.8,41.6 M890.8,45.6 Q890.8,48.6 887.8,48.6 M882.6,48.6 Q879.6,48.6 879.6,45.6" fill="none" stroke="#b4b4b4" stroke-width="1.3" stroke-linecap="round"/>
<path d="M882.2,41.6 Q882.2,40.9 882.9,40.9 H883.6 L884.3,39.9 H886.2 L886.9,40.9 H887.6 Q888.3,40.9 888.3,41.6 V45.8 Q888.3,46.5 887.6,46.5 H882.9 Q882.2,46.5 882.2,45.8 Z" fill="#f0f0f0"/>
<ellipse cx="885.25" cy="43.6" rx="1.5" ry="0.9" fill="none" stroke="#333" stroke-width="0.7"/>
<circle cx="757.4" cy="64.6" r="4.3" fill="#383838"/>
<text x="765.2" y="67.4" font-family="Liberation Sans" font-size="9.4" font-weight="400" fill="#dcdcdc" textLength="38.8" lengthAdjust="spacingAndGlyphs" >Rotation :</text>
<rect x="808.4" y="59.7" width="31.399999999999977" height="9.599999999999994" rx="3" fill="#282828" />
<path d="M831.5,62.5 L837.5,62.5 L834.5,66.5 Z" fill="#5a5a5a"/>
<text x="809.6" y="67.2" font-family="Liberation Sans" font-size="8" font-weight="400" fill="#585858" textLength="13.1" lengthAdjust="spacingAndGlyphs" >180</text>
<circle cx="852.5" cy="64.6" r="4.3" fill="#383838"/>
<text x="860.2" y="67.4" font-family="Liberation Sans" font-size="9.4" font-weight="400" fill="#dcdcdc" textLength="23.2" lengthAdjust="spacingAndGlyphs" >Miroir</text>
<circle cx="757.5" cy="81" r="4.3" fill="#383838"/>
<text x="765.2" y="83.8" font-family="Liberation Sans" font-size="9.4" font-weight="400" fill="#dcdcdc" textLength="72.5" lengthAdjust="spacingAndGlyphs" >Forcer l'affichage :</text>
<rect x="842.3" y="76.9" width="37.200000000000045" height="8.899999999999991" rx="3" fill="#282828" />
<rect x="869.3" y="76.9" width="1" height="8.899999999999991" rx="0" fill="#4a4a4a" />
<path d="M872.0,79.35 L878.0,79.35 L875,83.35 Z" fill="#5a5a5a"/>
<text x="844.1" y="83.8" font-family="Liberation Sans" font-size="8.4" font-weight="400" fill="#585858" textLength="16.3" lengthAdjust="spacingAndGlyphs" >16:9</text>
<rect x="747.5" y="106.2" width="222" height="5" rx="2.5" fill="none" stroke="#333333" stroke-width="1" />
<rect x="749" y="104.2" width="72.29999999999995" height="9" rx="0" fill="#232323" />
<text x="750.8" y="109.7" font-family="Liberation Sans" font-size="9.2" font-weight="700" fill="#e2e2e2" textLength="66.9" lengthAdjust="spacingAndGlyphs" >Réglages audio</text>
<rect x="747.5" y="122.9" width="222.5" height="57.29999999999998" rx="3" fill="none" stroke="#2f2f2f" stroke-width="1" />
<rect x="748.5" y="120.4" width="74.29999999999995" height="5" rx="0" fill="#232323" />
<text x="751.1" y="126.1" font-family="Liberation Sans" font-size="9.2" font-weight="700" fill="#e2e2e2" textLength="69.1" lengthAdjust="spacingAndGlyphs" >Rognage image</text>
<circle cx="758.3" cy="136.9" r="4.3" fill="#3a3a3a"/>
<path d="M755.5999999999999,137.0 L757.5,139.20000000000002 L761.3,133.9" fill="none" stroke="#4a9fe3" stroke-width="1.5" stroke-linecap="round" stroke-linejoin="round"/>
<text x="765.8" y="140.1" font-family="Liberation Sans" font-size="9.4" font-weight="400" fill="#dcdcdc" textLength="27.6" lengthAdjust="spacingAndGlyphs" >Activer</text>
<text x="821.3" y="140.3" font-family="Liberation Sans" font-size="9.4" font-weight="400" fill="#dcdcdc" textLength="56.1" lengthAdjust="spacingAndGlyphs" >Pré-réglages :</text>
<rect x="880.9" y="130.3" width="57.60000000000002" height="14.5" rx="3" fill="#2e2e2e" />
<rect x="924.5" y="130.3" width="1" height="14.5" rx="0" fill="#4a4a4a" />
<path d="M928.9,135.55 L934.9,135.55 L931.9,139.55 Z" fill="#eeeeee"/>
<text x="881.6" y="140.2" font-family="Liberation Sans" font-size="8.6" font-weight="400" fill="#dddddd" textLength="16.1" lengthAdjust="spacingAndGlyphs" >2.75</text>
<text x="762.3" y="157.2" font-family="Liberation Sans" font-size="9.4" font-weight="400" fill="#4597d6" textLength="45.5" lengthAdjust="spacingAndGlyphs" >Position X :</text>
<rect x="809.2" y="149.3" width="22.5" height="9.4" rx="2" fill="#2c2c2c" />
<text x="825.6" y="157.4" font-family="Liberation Sans" font-size="9.4" font-weight="400" fill="#e0e0e0" textLength="5.3" lengthAdjust="spacingAndGlyphs" >0</text>
<text x="833.8" y="157.4" font-family="Liberation Sans" font-size="9.4" font-weight="400" fill="#4597d6" textLength="10.1" lengthAdjust="spacingAndGlyphs" >px</text>
<text x="771.0" y="171.5" font-family="Liberation Sans" font-size="9.4" font-weight="400" fill="#4597d6" textLength="36.8" lengthAdjust="spacingAndGlyphs" >Largeur :</text>
<rect x="809.2" y="163.7" width="22.5" height="9.4" rx="2" fill="#2c2c2c" />
<text x="810.6" y="171.7" font-family="Liberation Sans" font-size="9.4" font-weight="400" fill="#e0e0e0" textLength="20.3" lengthAdjust="spacingAndGlyphs" >1920</text>
<text x="833.8" y="171.7" font-family="Liberation Sans" font-size="9.4" font-weight="400" fill="#4597d6" textLength="10.1" lengthAdjust="spacingAndGlyphs" >px</text>
<text x="865.3" y="157.2" font-family="Liberation Sans" font-size="9.4" font-weight="400" fill="#4597d6" textLength="45.1" lengthAdjust="spacingAndGlyphs" >Position Y :</text>
<rect x="912.3" y="149.6" width="22.4" height="9.4" rx="2" fill="#2c2c2c" />
<text x="918.0" y="157.4" font-family="Liberation Sans" font-size="9.4" font-weight="400" fill="#e0e0e0" textLength="15.1" lengthAdjust="spacingAndGlyphs" >191</text>
<text x="936.6" y="157.4" font-family="Liberation Sans" font-size="9.4" font-weight="400" fill="#4597d6" textLength="10.2" lengthAdjust="spacingAndGlyphs" >px</text>
<text x="873.2" y="171.5" font-family="Liberation Sans" font-size="9.4" font-weight="400" fill="#4597d6" textLength="37.2" lengthAdjust="spacingAndGlyphs" >Hauteur :</text>
<rect x="912.3" y="164.2" width="22.4" height="9.4" rx="2" fill="#2c2c2c" />
<text x="918.0" y="171.7" font-family="Liberation Sans" font-size="9.4" font-weight="400" fill="#e0e0e0" textLength="15.1" lengthAdjust="spacingAndGlyphs" >698</text>
<text x="936.6" y="171.7" font-family="Liberation Sans" font-size="9.4" font-weight="400" fill="#4597d6" textLength="10.2" lengthAdjust="spacingAndGlyphs" >px</text>
<rect x="747.5" y="192.5" width="222" height="5" rx="2.5" fill="none" stroke="#333333" stroke-width="1" />
<rect x="749" y="190.5" width="203.60000000000002" height="9" rx="0" fill="#232323" />
<text x="750.8" y="196.0" font-family="Liberation Sans" font-size="9.2" font-weight="700" fill="#e2e2e2" textLength="198.2" lengthAdjust="spacingAndGlyphs" >Afficher un timecode / nom du fichier / texte</text>
<rect x="747.5" y="209.2" width="222" height="5" rx="2.5" fill="none" stroke="#333333" stroke-width="1" />
<rect x="749" y="207.2" width="105.39999999999998" height="9" rx="0" fill="#232323" />
<text x="750.8" y="212.7" font-family="Liberation Sans" font-size="9.2" font-weight="700" fill="#e2e2e2" textLength="100.0" lengthAdjust="spacingAndGlyphs" >Ajouter des sous-titres</text>
<rect x="747.5" y="225.9" width="222" height="5" rx="2.5" fill="none" stroke="#333333" stroke-width="1" />
<rect x="749" y="223.9" width="170.20000000000005" height="9" rx="0" fill="#232323" />
<text x="750.8" y="229.4" font-family="Liberation Sans" font-size="9.2" font-weight="700" fill="#e2e2e2" textLength="164.8" lengthAdjust="spacingAndGlyphs" >Ajouter une image / vidéo en filigrane</text>
<rect x="747.5" y="242.5" width="222" height="5" rx="2.5" fill="none" stroke="#333333" stroke-width="1" />
<rect x="749" y="240.5" width="60.10000000000002" height="9" rx="0" fill="#232323" />
<text x="750.8" y="246.0" font-family="Liberation Sans" font-size="9.2" font-weight="700" fill="#e2e2e2" textLength="54.7" lengthAdjust="spacingAndGlyphs" >Colorimétrie</text>
<rect x="747.5" y="259.2" width="222" height="5" rx="2.5" fill="none" stroke="#333333" stroke-width="1" />
<rect x="749" y="257.2" width="85.70000000000005" height="9" rx="0" fill="#232323" />
<text x="750.8" y="262.7" font-family="Liberation Sans" font-size="9.2" font-weight="700" fill="#e2e2e2" textLength="80.3" lengthAdjust="spacingAndGlyphs" >Retouche d'image</text>
<rect x="747.5" y="275.9" width="222" height="5" rx="2.5" fill="none" stroke="#333333" stroke-width="1" />
<rect x="749" y="273.9" width="57" height="9" rx="0" fill="#232323" />
<text x="750.8" y="279.4" font-family="Liberation Sans" font-size="9.2" font-weight="700" fill="#e2e2e2" textLength="51.6" lengthAdjust="spacingAndGlyphs" >Corrections</text>
<rect x="747.5" y="292.6" width="222" height="5" rx="2.5" fill="none" stroke="#333333" stroke-width="1" />
<rect x="749" y="290.6" width="53.299999999999955" height="9" rx="0" fill="#232323" />
<text x="750.8" y="296.1" font-family="Liberation Sans" font-size="9.2" font-weight="700" fill="#e2e2e2" textLength="47.9" lengthAdjust="spacingAndGlyphs" >Transitions</text>
<rect x="747.5" y="309.3" width="222" height="5" rx="2.5" fill="none" stroke="#333333" stroke-width="1" />
<rect x="749" y="307.3" width="90.39999999999998" height="9" rx="0" fill="#232323" />
<text x="750.8" y="312.8" font-family="Liberation Sans" font-size="9.2" font-weight="700" fill="#e2e2e2" textLength="85.0" lengthAdjust="spacingAndGlyphs" >Séquence d'images</text>
<rect x="747.5" y="325.9" width="222" height="5" rx="2.5" fill="none" stroke="#333333" stroke-width="1" />
<rect x="749" y="323.9" width="48.60000000000002" height="9" rx="0" fill="#232323" />
<text x="750.8" y="329.4" font-family="Liberation Sans" font-size="9.2" font-weight="700" fill="#e2e2e2" textLength="43.2" lengthAdjust="spacingAndGlyphs" >Timecode</text>
<rect x="747.5" y="342.6" width="222" height="5" rx="2.5" fill="none" stroke="#333333" stroke-width="1" />
<rect x="749" y="340.6" width="116" height="9" rx="0" fill="#232323" />
<text x="750.8" y="346.1" font-family="Liberation Sans" font-size="9.2" font-weight="700" fill="#e2e2e2" textLength="110.6" lengthAdjust="spacingAndGlyphs" >Fonctionnalités avancées</text>
<rect x="747.4" y="354.4" width="222.2" height="13.6" rx="5" fill="#323232" />
<text x="833.6" y="364.2" font-family="Liberation Sans" font-size="9" font-weight="700" fill="#e2e2e2" textLength="49.8" lengthAdjust="spacingAndGlyphs" >Réinitialiser</text>
</svg>
</body></html>
